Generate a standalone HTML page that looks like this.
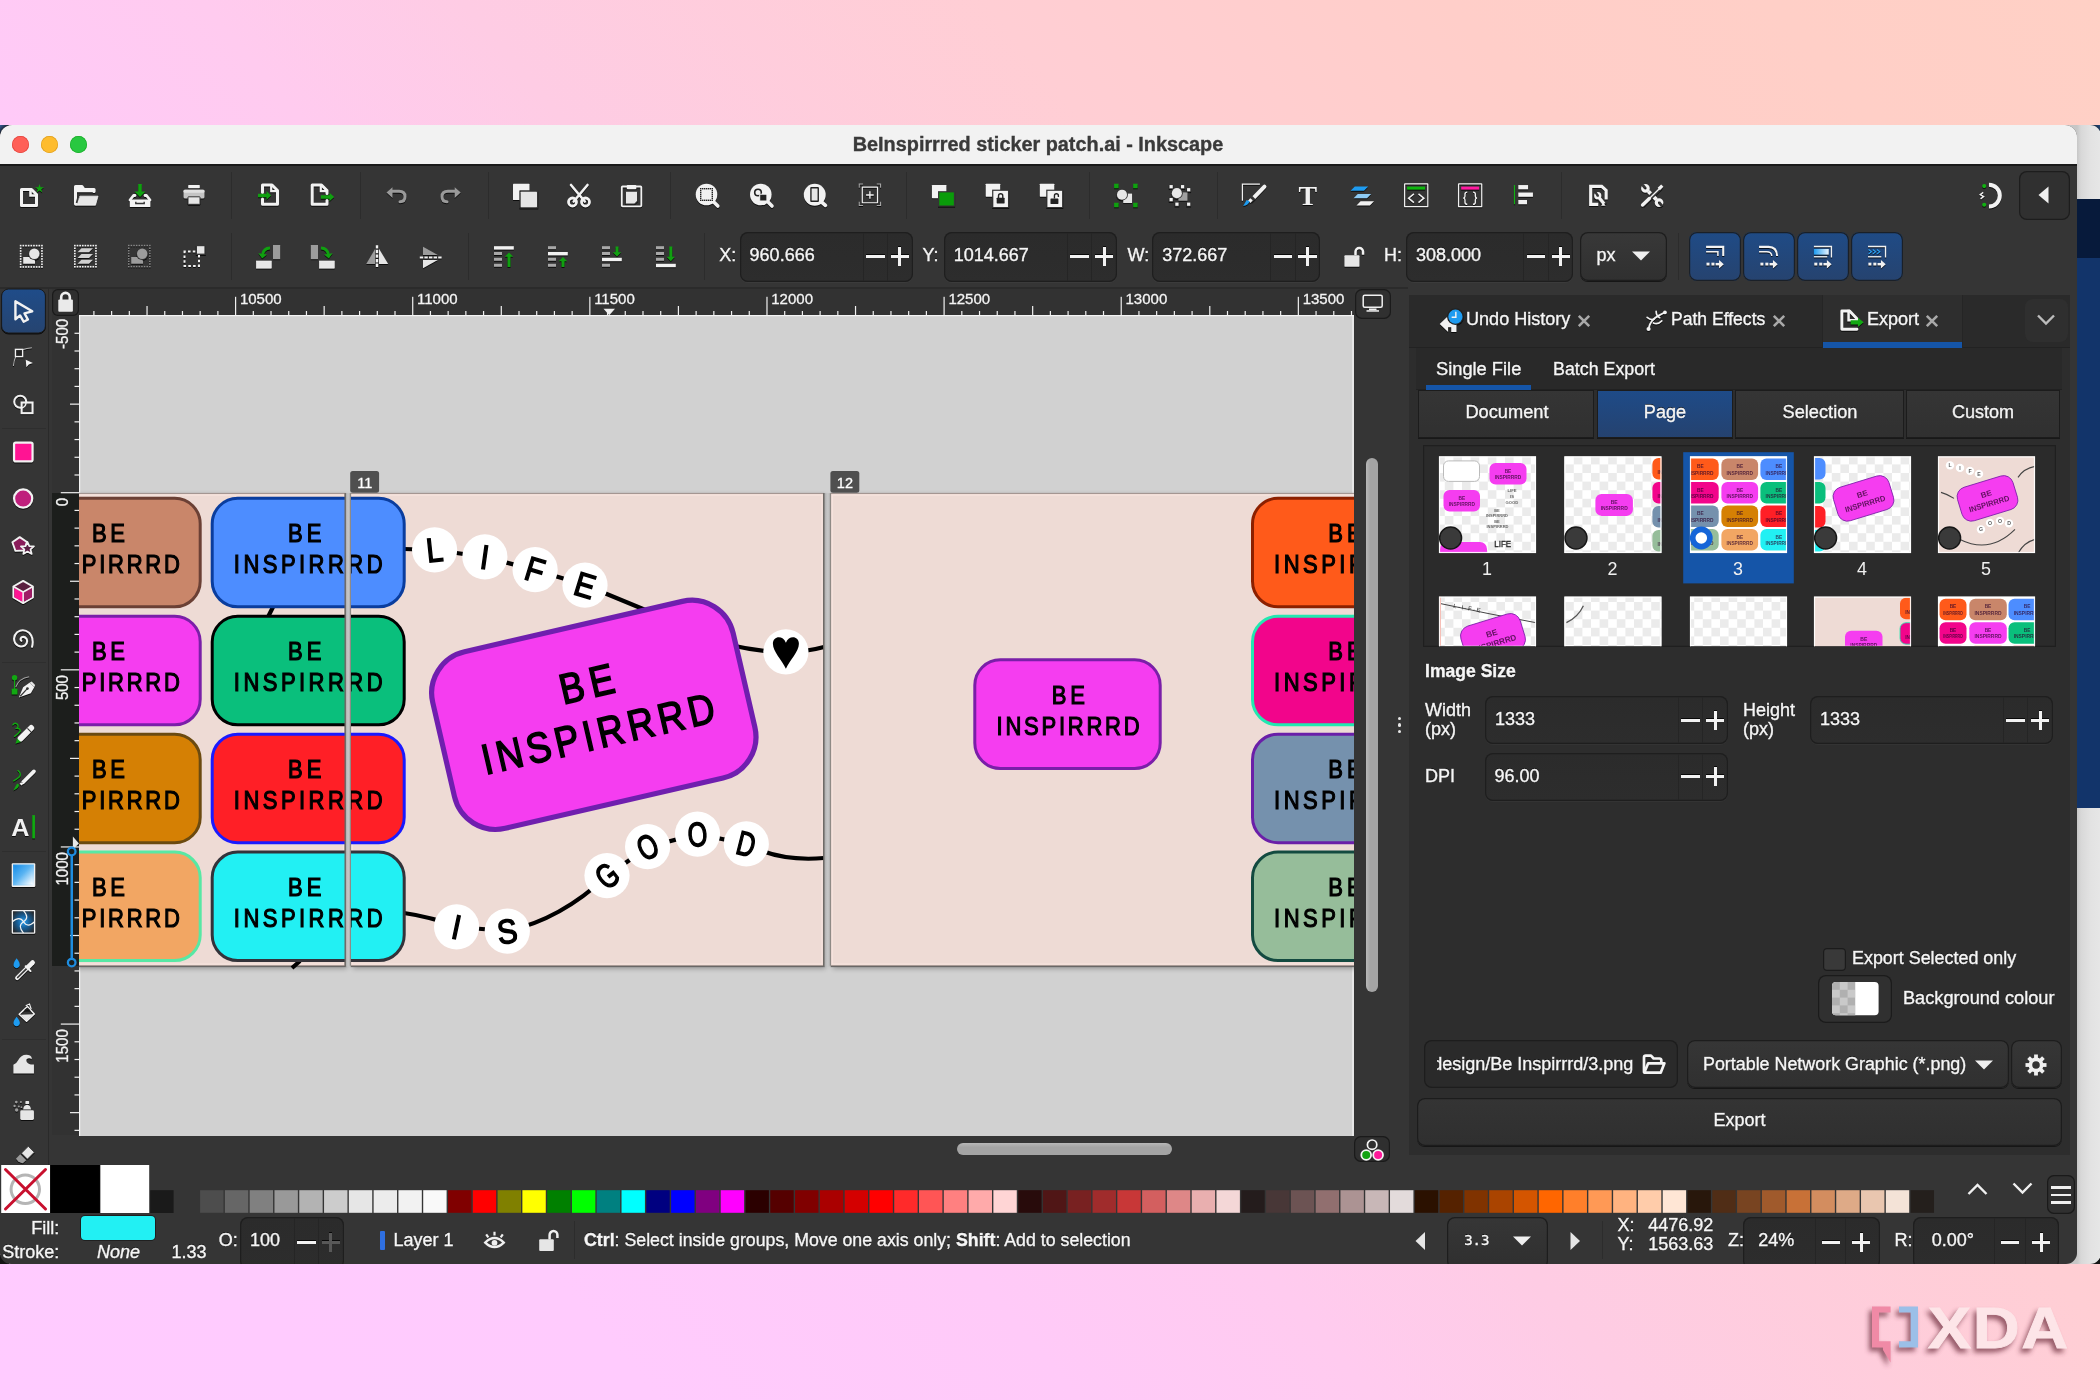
<!DOCTYPE html><html><head><meta charset="utf-8"><title>Inkscape</title><style>
html,body{margin:0;padding:0}
body{width:2100px;height:1400px;position:relative;overflow:hidden;font-family:"Liberation Sans",sans-serif;
background:linear-gradient(50deg,#ffcbff 0%,#ffcbfd 20%,#ffcaf8 33%,#ffcbef 42%,#fecce4 50%,#ffced4 66%,#ffcec9 80%,#ffd0c5 100%);}
div,svg{position:absolute;box-sizing:border-box}
svg{overflow:visible}
.t{white-space:nowrap;text-shadow:0 -1px 0 rgba(0,0,0,0.8);-webkit-text-stroke:0.35px currentColor}
#win{left:0;top:125px;width:2077px;height:1139px;border-radius:12px 12px 11px 11px;overflow:hidden;background:#353535;}
#wi{left:0;top:-125px;width:2100px;height:1400px;will-change:transform}
</style></head><body><div style="left:0px;top:125px;width:9px;height:9px;background:linear-gradient(135deg,#3a5f9a,#101010 60%);"></div><div style="left:0px;top:1255px;width:9px;height:9px;background:#151515;"></div><div style="left:2090px;top:125px;width:10px;height:10px;background:linear-gradient(225deg,#1f4a80,#151515 60%);"></div><div style="left:2090px;top:1254px;width:10px;height:10px;background:#151515;"></div><div style="left:2060px;top:125px;width:40.6px;height:1139px;background:linear-gradient(90deg,#c6c6c6 17px,#d8d8d8 21px,#e2e2e2 30px,#e6e6e6 40px);border-radius:11px;overflow:hidden;"><div style="left:0px;top:73.5px;width:60px;height:59px;background:#071a3b;"></div><div style="left:0px;top:132.5px;width:60px;height:550.5px;background:#12346a;"></div></div><div id="win"><div id="wi"><div style="left:0px;top:125px;width:2077px;height:40px;background:#f2f2f2;"></div><div style="left:0px;top:164.3px;width:2077px;height:1.4px;background:#1a1a1a;"></div><div style="left:11.799999999999999px;top:135.70000000000002px;width:17.2px;height:17.2px;background:#ff5f57;border-radius:50%;box-shadow:inset 0 0 0 0.7px #e2463f;"></div><div style="left:41.0px;top:135.70000000000002px;width:17.2px;height:17.2px;background:#febc2e;border-radius:50%;box-shadow:inset 0 0 0 0.7px #dfa023;"></div><div style="left:70.10000000000001px;top:135.70000000000002px;width:17.2px;height:17.2px;background:#28c840;border-radius:50%;box-shadow:inset 0 0 0 0.7px #1dad2b;"></div><div class="t" style="left:537.5px;width:1000px;text-align:center;top:134px;font-size:20px;line-height:20px;color:#3a3a3a;font-weight:bold;transform:scale(0.992,1);transform-origin:50% 0;text-shadow:none;">BeInspirrred sticker patch.ai - Inkscape</div><div style="left:231px;top:172px;width:1px;height:47px;background:#2c2c2c;"></div><div style="left:359.5px;top:172px;width:1px;height:47px;background:#2c2c2c;"></div><div style="left:488px;top:172px;width:1px;height:47px;background:#2c2c2c;"></div><div style="left:669.5px;top:172px;width:1px;height:47px;background:#2c2c2c;"></div><div style="left:906px;top:172px;width:1px;height:47px;background:#2c2c2c;"></div><div style="left:1088.5px;top:172px;width:1px;height:47px;background:#2c2c2c;"></div><div style="left:1217px;top:172px;width:1px;height:47px;background:#2c2c2c;"></div><div style="left:1561px;top:172px;width:1px;height:47px;background:#2c2c2c;"></div><div style="left:231px;top:233px;width:1px;height:47px;background:#2c2c2c;"></div><div style="left:467.5px;top:233px;width:1px;height:47px;background:#2c2c2c;"></div><div style="left:703.5px;top:233px;width:1px;height:47px;background:#2c2c2c;"></div><div style="left:1677.5px;top:233px;width:1px;height:47px;background:#2c2c2c;"></div><div class="t" style="left:719.3px;top:245px;font-size:18px;line-height:18px;color:#f6f6f6;transform:scale(1,1.04);transform-origin:0 0;">X:</div><div style="left:739.6px;top:232.1px;width:173px;height:49.5px;background:linear-gradient(#2b2b2b,#2d2d2d);border-radius:8px;box-shadow:inset 0 0 0 1.2px #1e1e1e, 0 1px 0 rgba(255,255,255,0.03);"></div><div class="t" style="left:749.6px;top:245px;font-size:18px;line-height:18px;color:#f6f6f6;transform:scale(1,1.04);transform-origin:0 0;">960.666</div><div style="left:862.6px;top:233.1px;width:1px;height:47.5px;background:#252525;"></div><div style="left:887.1px;top:233.1px;width:1px;height:47.5px;background:#252525;"></div><div style="left:866.15px;top:255.35000000000002px;width:18.4px;height:3px;background:#f2f2f2;box-shadow:0 -1px 0 rgba(0,0,0,0.8);"></div><div style="left:890.85px;top:255.35000000000002px;width:18.2px;height:3px;background:#f2f2f2;box-shadow:0 -1px 0 rgba(0,0,0,0.8);"></div><div style="left:898.45px;top:247.25000000000003px;width:3px;height:19.2px;background:#f2f2f2;box-shadow:0 -1px 0 rgba(0,0,0,0.8);"></div><div class="t" style="left:922.6px;top:245px;font-size:18px;line-height:18px;color:#f6f6f6;transform:scale(1,1.04);transform-origin:0 0;">Y:</div><div style="left:943.7px;top:232.1px;width:173px;height:49.5px;background:linear-gradient(#2b2b2b,#2d2d2d);border-radius:8px;box-shadow:inset 0 0 0 1.2px #1e1e1e, 0 1px 0 rgba(255,255,255,0.03);"></div><div class="t" style="left:953.7px;top:245px;font-size:18px;line-height:18px;color:#f6f6f6;transform:scale(1,1.04);transform-origin:0 0;">1014.667</div><div style="left:1066.7px;top:233.1px;width:1px;height:47.5px;background:#252525;"></div><div style="left:1091.2px;top:233.1px;width:1px;height:47.5px;background:#252525;"></div><div style="left:1070.25px;top:255.35000000000002px;width:18.4px;height:3px;background:#f2f2f2;box-shadow:0 -1px 0 rgba(0,0,0,0.8);"></div><div style="left:1094.95px;top:255.35000000000002px;width:18.2px;height:3px;background:#f2f2f2;box-shadow:0 -1px 0 rgba(0,0,0,0.8);"></div><div style="left:1102.55px;top:247.25000000000003px;width:3px;height:19.2px;background:#f2f2f2;box-shadow:0 -1px 0 rgba(0,0,0,0.8);"></div><div class="t" style="left:1127.5px;top:245px;font-size:18px;line-height:18px;color:#f6f6f6;transform:scale(1,1.04);transform-origin:0 0;">W:</div><div style="left:1152.3px;top:232.1px;width:167.8px;height:49.5px;background:linear-gradient(#2b2b2b,#2d2d2d);border-radius:8px;box-shadow:inset 0 0 0 1.2px #1e1e1e, 0 1px 0 rgba(255,255,255,0.03);"></div><div class="t" style="left:1162.3px;top:245px;font-size:18px;line-height:18px;color:#f6f6f6;transform:scale(1,1.04);transform-origin:0 0;">372.667</div><div style="left:1270.1px;top:233.1px;width:1px;height:47.5px;background:#252525;"></div><div style="left:1294.6px;top:233.1px;width:1px;height:47.5px;background:#252525;"></div><div style="left:1273.6499999999999px;top:255.35000000000002px;width:18.4px;height:3px;background:#f2f2f2;box-shadow:0 -1px 0 rgba(0,0,0,0.8);"></div><div style="left:1298.35px;top:255.35000000000002px;width:18.2px;height:3px;background:#f2f2f2;box-shadow:0 -1px 0 rgba(0,0,0,0.8);"></div><div style="left:1305.9499999999998px;top:247.25000000000003px;width:3px;height:19.2px;background:#f2f2f2;box-shadow:0 -1px 0 rgba(0,0,0,0.8);"></div><div class="t" style="left:1384px;top:245px;font-size:18px;line-height:18px;color:#f6f6f6;transform:scale(1,1.04);transform-origin:0 0;">H:</div><div style="left:1406px;top:232.1px;width:167.4px;height:49.5px;background:linear-gradient(#2b2b2b,#2d2d2d);border-radius:8px;box-shadow:inset 0 0 0 1.2px #1e1e1e, 0 1px 0 rgba(255,255,255,0.03);"></div><div class="t" style="left:1416px;top:245px;font-size:18px;line-height:18px;color:#f6f6f6;transform:scale(1,1.04);transform-origin:0 0;">308.000</div><div style="left:1523.4px;top:233.1px;width:1px;height:47.5px;background:#252525;"></div><div style="left:1547.9px;top:233.1px;width:1px;height:47.5px;background:#252525;"></div><div style="left:1526.95px;top:255.35000000000002px;width:18.4px;height:3px;background:#f2f2f2;box-shadow:0 -1px 0 rgba(0,0,0,0.8);"></div><div style="left:1551.65px;top:255.35000000000002px;width:18.2px;height:3px;background:#f2f2f2;box-shadow:0 -1px 0 rgba(0,0,0,0.8);"></div><div style="left:1559.25px;top:247.25000000000003px;width:3px;height:19.2px;background:#f2f2f2;box-shadow:0 -1px 0 rgba(0,0,0,0.8);"></div><div style="left:1580px;top:232.3px;width:86.5px;height:48.6px;background:linear-gradient(#383838,#303030);border-radius:8px;box-shadow:inset 0 0 0 1.2px #1d1d1d, 0 1px 0 #161616;"></div><div class="t" style="left:1596.5px;top:245px;font-size:18px;line-height:18px;color:#f6f6f6;transform:scale(1,1.04);transform-origin:0 0;">px</div><svg style="left:1631px;top:250px;" width="20" height="12" viewBox="0 0 20 12"><path d="M1 1.5 L19 1.5 L10 10.5Z" fill="#f0f0f0"/></svg><div style="left:1688.6px;top:232.3px;width:52px;height:48.8px;background:linear-gradient(#1f4b86,#26436f);border-radius:8px;box-shadow:inset 0 0 0 1.2px #1a2028;"></div><div style="left:1742.7px;top:232.3px;width:52px;height:48.8px;background:linear-gradient(#1f4b86,#26436f);border-radius:8px;box-shadow:inset 0 0 0 1.2px #1a2028;"></div><div style="left:1796.7px;top:232.3px;width:52px;height:48.8px;background:linear-gradient(#1f4b86,#26436f);border-radius:8px;box-shadow:inset 0 0 0 1.2px #1a2028;"></div><div style="left:1850.8px;top:232.3px;width:52px;height:48.8px;background:linear-gradient(#1f4b86,#26436f);border-radius:8px;box-shadow:inset 0 0 0 1.2px #1a2028;"></div><div style="left:2019px;top:171.3px;width:51px;height:48.5px;background:#303030;border-radius:8px;box-shadow:inset 0 0 0 1.2px #1d1d1d;"></div><svg style="left:2036px;top:185px;" width="14" height="20" viewBox="0 0 14 20"><path d="M12.5 1.5 L12.5 18.5 L2.5 10Z" fill="#f0f0f0"/></svg><div style="left:0px;top:287px;width:1408px;height:1.5px;background:#2b2b2b;"></div><div style="left:47.5px;top:288px;width:1.3px;height:877px;background:#2a2a2a;"></div><div style="left:52px;top:288.5px;width:1303px;height:27px;background:#323232;"></div><div style="left:52px;top:315px;width:27px;height:820px;background:#323232;"></div><div style="left:52px;top:493px;width:27px;height:473px;background:#1c1e1c;"></div><svg style="left:0px;top:0px;" width="1408" height="1200" viewBox="0 0 1408 1200"><rect x="93.30" y="311" width="1.2" height="4.5" fill="#f0f0f0"/><rect x="111.01" y="311" width="1.2" height="4.5" fill="#f0f0f0"/><rect x="128.72" y="311" width="1.2" height="4.5" fill="#f0f0f0"/><rect x="146.44" y="306" width="1.2" height="9.5" fill="#f0f0f0"/><rect x="164.15" y="311" width="1.2" height="4.5" fill="#f0f0f0"/><rect x="181.86" y="311" width="1.2" height="4.5" fill="#f0f0f0"/><rect x="199.57" y="311" width="1.2" height="4.5" fill="#f0f0f0"/><rect x="217.29" y="311" width="1.2" height="4.5" fill="#f0f0f0"/><rect x="235.00" y="296.8" width="1.2" height="18.7" fill="#f0f0f0"/><text x="239.90" y="303.8" font-family="Liberation Sans, sans-serif" font-size="15" fill="#f4f4f4" stroke="#f4f4f4" stroke-width="0.3">10500</text><rect x="252.71" y="311" width="1.2" height="4.5" fill="#f0f0f0"/><rect x="270.42" y="311" width="1.2" height="4.5" fill="#f0f0f0"/><rect x="288.14" y="311" width="1.2" height="4.5" fill="#f0f0f0"/><rect x="305.85" y="311" width="1.2" height="4.5" fill="#f0f0f0"/><rect x="323.56" y="306" width="1.2" height="9.5" fill="#f0f0f0"/><rect x="341.27" y="311" width="1.2" height="4.5" fill="#f0f0f0"/><rect x="358.99" y="311" width="1.2" height="4.5" fill="#f0f0f0"/><rect x="376.70" y="311" width="1.2" height="4.5" fill="#f0f0f0"/><rect x="394.41" y="311" width="1.2" height="4.5" fill="#f0f0f0"/><rect x="412.12" y="296.8" width="1.2" height="18.7" fill="#f0f0f0"/><text x="417.03" y="303.8" font-family="Liberation Sans, sans-serif" font-size="15" fill="#f4f4f4" stroke="#f4f4f4" stroke-width="0.3">11000</text><rect x="429.84" y="311" width="1.2" height="4.5" fill="#f0f0f0"/><rect x="447.55" y="311" width="1.2" height="4.5" fill="#f0f0f0"/><rect x="465.26" y="311" width="1.2" height="4.5" fill="#f0f0f0"/><rect x="482.97" y="311" width="1.2" height="4.5" fill="#f0f0f0"/><rect x="500.69" y="306" width="1.2" height="9.5" fill="#f0f0f0"/><rect x="518.40" y="311" width="1.2" height="4.5" fill="#f0f0f0"/><rect x="536.11" y="311" width="1.2" height="4.5" fill="#f0f0f0"/><rect x="553.82" y="311" width="1.2" height="4.5" fill="#f0f0f0"/><rect x="571.54" y="311" width="1.2" height="4.5" fill="#f0f0f0"/><rect x="589.25" y="296.8" width="1.2" height="18.7" fill="#f0f0f0"/><text x="594.15" y="303.8" font-family="Liberation Sans, sans-serif" font-size="15" fill="#f4f4f4" stroke="#f4f4f4" stroke-width="0.3">11500</text><rect x="606.96" y="311" width="1.2" height="4.5" fill="#f0f0f0"/><rect x="624.67" y="311" width="1.2" height="4.5" fill="#f0f0f0"/><rect x="642.39" y="311" width="1.2" height="4.5" fill="#f0f0f0"/><rect x="660.10" y="311" width="1.2" height="4.5" fill="#f0f0f0"/><rect x="677.81" y="306" width="1.2" height="9.5" fill="#f0f0f0"/><rect x="695.52" y="311" width="1.2" height="4.5" fill="#f0f0f0"/><rect x="713.24" y="311" width="1.2" height="4.5" fill="#f0f0f0"/><rect x="730.95" y="311" width="1.2" height="4.5" fill="#f0f0f0"/><rect x="748.66" y="311" width="1.2" height="4.5" fill="#f0f0f0"/><rect x="766.38" y="296.8" width="1.2" height="18.7" fill="#f0f0f0"/><text x="771.27" y="303.8" font-family="Liberation Sans, sans-serif" font-size="15" fill="#f4f4f4" stroke="#f4f4f4" stroke-width="0.3">12000</text><rect x="784.09" y="311" width="1.2" height="4.5" fill="#f0f0f0"/><rect x="801.80" y="311" width="1.2" height="4.5" fill="#f0f0f0"/><rect x="819.51" y="311" width="1.2" height="4.5" fill="#f0f0f0"/><rect x="837.23" y="311" width="1.2" height="4.5" fill="#f0f0f0"/><rect x="854.94" y="306" width="1.2" height="9.5" fill="#f0f0f0"/><rect x="872.65" y="311" width="1.2" height="4.5" fill="#f0f0f0"/><rect x="890.36" y="311" width="1.2" height="4.5" fill="#f0f0f0"/><rect x="908.08" y="311" width="1.2" height="4.5" fill="#f0f0f0"/><rect x="925.79" y="311" width="1.2" height="4.5" fill="#f0f0f0"/><rect x="943.50" y="296.8" width="1.2" height="18.7" fill="#f0f0f0"/><text x="948.40" y="303.8" font-family="Liberation Sans, sans-serif" font-size="15" fill="#f4f4f4" stroke="#f4f4f4" stroke-width="0.3">12500</text><rect x="961.21" y="311" width="1.2" height="4.5" fill="#f0f0f0"/><rect x="978.93" y="311" width="1.2" height="4.5" fill="#f0f0f0"/><rect x="996.64" y="311" width="1.2" height="4.5" fill="#f0f0f0"/><rect x="1014.35" y="311" width="1.2" height="4.5" fill="#f0f0f0"/><rect x="1032.06" y="306" width="1.2" height="9.5" fill="#f0f0f0"/><rect x="1049.78" y="311" width="1.2" height="4.5" fill="#f0f0f0"/><rect x="1067.49" y="311" width="1.2" height="4.5" fill="#f0f0f0"/><rect x="1085.20" y="311" width="1.2" height="4.5" fill="#f0f0f0"/><rect x="1102.91" y="311" width="1.2" height="4.5" fill="#f0f0f0"/><rect x="1120.62" y="296.8" width="1.2" height="18.7" fill="#f0f0f0"/><text x="1125.52" y="303.8" font-family="Liberation Sans, sans-serif" font-size="15" fill="#f4f4f4" stroke="#f4f4f4" stroke-width="0.3">13000</text><rect x="1138.34" y="311" width="1.2" height="4.5" fill="#f0f0f0"/><rect x="1156.05" y="311" width="1.2" height="4.5" fill="#f0f0f0"/><rect x="1173.76" y="311" width="1.2" height="4.5" fill="#f0f0f0"/><rect x="1191.48" y="311" width="1.2" height="4.5" fill="#f0f0f0"/><rect x="1209.19" y="306" width="1.2" height="9.5" fill="#f0f0f0"/><rect x="1226.90" y="311" width="1.2" height="4.5" fill="#f0f0f0"/><rect x="1244.61" y="311" width="1.2" height="4.5" fill="#f0f0f0"/><rect x="1262.33" y="311" width="1.2" height="4.5" fill="#f0f0f0"/><rect x="1280.04" y="311" width="1.2" height="4.5" fill="#f0f0f0"/><rect x="1297.75" y="296.8" width="1.2" height="18.7" fill="#f0f0f0"/><text x="1302.65" y="303.8" font-family="Liberation Sans, sans-serif" font-size="15" fill="#f4f4f4" stroke="#f4f4f4" stroke-width="0.3">13500</text><rect x="1315.46" y="311" width="1.2" height="4.5" fill="#f0f0f0"/><rect x="1333.17" y="311" width="1.2" height="4.5" fill="#f0f0f0"/><rect x="1350.89" y="311" width="1.2" height="4.5" fill="#f0f0f0"/><text transform="translate(67.6 318.88) rotate(-90) scale(1 1.04)" text-anchor="end" font-family="Liberation Sans, sans-serif" font-size="15" fill="#f4f4f4" stroke="#f4f4f4" stroke-width="0.3">-500</text><rect x="74.5" y="332.69" width="4.5" height="1.2" fill="#f0f0f0"/><rect x="74.5" y="350.40" width="4.5" height="1.2" fill="#f0f0f0"/><rect x="74.5" y="368.11" width="4.5" height="1.2" fill="#f0f0f0"/><rect x="74.5" y="385.82" width="4.5" height="1.2" fill="#f0f0f0"/><rect x="70" y="403.54" width="9" height="1.2" fill="#f0f0f0"/><rect x="74.5" y="421.25" width="4.5" height="1.2" fill="#f0f0f0"/><rect x="74.5" y="438.96" width="4.5" height="1.2" fill="#f0f0f0"/><rect x="74.5" y="456.67" width="4.5" height="1.2" fill="#f0f0f0"/><rect x="74.5" y="474.39" width="4.5" height="1.2" fill="#f0f0f0"/><rect x="60.8" y="492.10" width="18.2" height="1.2" fill="#f0f0f0"/><text transform="translate(67.6 497.90) rotate(-90) scale(1 1.04)" text-anchor="end" font-family="Liberation Sans, sans-serif" font-size="15" fill="#f4f4f4" stroke="#f4f4f4" stroke-width="0.3">0</text><rect x="74.5" y="509.81" width="4.5" height="1.2" fill="#f0f0f0"/><rect x="74.5" y="527.52" width="4.5" height="1.2" fill="#f0f0f0"/><rect x="74.5" y="545.24" width="4.5" height="1.2" fill="#f0f0f0"/><rect x="74.5" y="562.95" width="4.5" height="1.2" fill="#f0f0f0"/><rect x="70" y="580.66" width="9" height="1.2" fill="#f0f0f0"/><rect x="74.5" y="598.38" width="4.5" height="1.2" fill="#f0f0f0"/><rect x="74.5" y="616.09" width="4.5" height="1.2" fill="#f0f0f0"/><rect x="74.5" y="633.80" width="4.5" height="1.2" fill="#f0f0f0"/><rect x="74.5" y="651.51" width="4.5" height="1.2" fill="#f0f0f0"/><rect x="60.8" y="669.23" width="18.2" height="1.2" fill="#f0f0f0"/><text transform="translate(67.6 675.03) rotate(-90) scale(1 1.04)" text-anchor="end" font-family="Liberation Sans, sans-serif" font-size="15" fill="#f4f4f4" stroke="#f4f4f4" stroke-width="0.3">500</text><rect x="74.5" y="686.94" width="4.5" height="1.2" fill="#f0f0f0"/><rect x="74.5" y="704.65" width="4.5" height="1.2" fill="#f0f0f0"/><rect x="74.5" y="722.36" width="4.5" height="1.2" fill="#f0f0f0"/><rect x="74.5" y="740.07" width="4.5" height="1.2" fill="#f0f0f0"/><rect x="70" y="757.79" width="9" height="1.2" fill="#f0f0f0"/><rect x="74.5" y="775.50" width="4.5" height="1.2" fill="#f0f0f0"/><rect x="74.5" y="793.21" width="4.5" height="1.2" fill="#f0f0f0"/><rect x="74.5" y="810.92" width="4.5" height="1.2" fill="#f0f0f0"/><rect x="74.5" y="828.64" width="4.5" height="1.2" fill="#f0f0f0"/><rect x="60.8" y="846.35" width="18.2" height="1.2" fill="#f0f0f0"/><text transform="translate(67.6 852.15) rotate(-90) scale(1 1.04)" text-anchor="end" font-family="Liberation Sans, sans-serif" font-size="15" fill="#f4f4f4" stroke="#f4f4f4" stroke-width="0.3">1000</text><rect x="74.5" y="864.06" width="4.5" height="1.2" fill="#f0f0f0"/><rect x="74.5" y="881.77" width="4.5" height="1.2" fill="#f0f0f0"/><rect x="74.5" y="899.49" width="4.5" height="1.2" fill="#f0f0f0"/><rect x="74.5" y="917.20" width="4.5" height="1.2" fill="#f0f0f0"/><rect x="70" y="934.91" width="9" height="1.2" fill="#f0f0f0"/><rect x="74.5" y="952.62" width="4.5" height="1.2" fill="#f0f0f0"/><rect x="74.5" y="970.34" width="4.5" height="1.2" fill="#f0f0f0"/><rect x="74.5" y="988.05" width="4.5" height="1.2" fill="#f0f0f0"/><rect x="74.5" y="1005.76" width="4.5" height="1.2" fill="#f0f0f0"/><rect x="60.8" y="1023.48" width="18.2" height="1.2" fill="#f0f0f0"/><text transform="translate(67.6 1029.28) rotate(-90) scale(1 1.04)" text-anchor="end" font-family="Liberation Sans, sans-serif" font-size="15" fill="#f4f4f4" stroke="#f4f4f4" stroke-width="0.3">1500</text><rect x="74.5" y="1041.19" width="4.5" height="1.2" fill="#f0f0f0"/><rect x="74.5" y="1058.90" width="4.5" height="1.2" fill="#f0f0f0"/><rect x="74.5" y="1076.61" width="4.5" height="1.2" fill="#f0f0f0"/><rect x="74.5" y="1094.33" width="4.5" height="1.2" fill="#f0f0f0"/><rect x="70" y="1112.04" width="9" height="1.2" fill="#f0f0f0"/><rect x="74.5" y="1129.75" width="4.5" height="1.2" fill="#f0f0f0"/><path d="M603.5 308.8 L615 308.8 L609.3 315.2Z" fill="#f0f0f0"/><path d="M72.9 836.6 L78.9 843.4 L72.9 849.6Z" fill="#e8e8e8"/><rect x="70.5" y="851" width="2.5" height="112" fill="#1e8de0"/><circle cx="71.7" cy="851.5" r="3.8" fill="#1c1e1c" stroke="#1e8de0" stroke-width="2.3"/><circle cx="71.7" cy="962.6" r="3.8" fill="#1c1e1c" stroke="#1e8de0" stroke-width="2.3"/></svg><div style="left:52.3px;top:288.5px;width:27px;height:27px;background:#2f2f2f;border-radius:6px;box-shadow:inset 0 0 0 1.2px #1a1a1a;"></div><svg style="left:56px;top:290px;" width="20" height="24" viewBox="0 0 20 24"><path d="M5.2 10 V7.2 a4.3 4.3 0 0 1 8.6 0 V10" fill="none" stroke="#f0f0f0" stroke-width="2.6"/><rect x="2.3" y="9.5" width="14.6" height="12.3" rx="1" fill="#eaeaea"/></svg><div style="left:1355px;top:288.5px;width:35.5px;height:30px;background:#303030;border-radius:7px;box-shadow:inset 0 0 0 1.2px #1b1b1b;"></div><svg style="left:1361.5px;top:293px;" width="22" height="20" viewBox="0 0 22 20"><rect x="1.2" y="2.2" width="19" height="12" rx="1.5" fill="none" stroke="#f0f0f0" stroke-width="1.5"/><rect x="7" y="15.5" width="7.5" height="1.6" fill="#f0f0f0"/><rect x="4.5" y="17.2" width="12.5" height="1.5" fill="#f0f0f0"/></svg><div style="left:1366px;top:457.7px;width:12.3px;height:534.5px;background:linear-gradient(90deg,#b8b8b8,#a4a4a4 35%,#a4a4a4);border-radius:6px;"></div><div style="left:957px;top:1143px;width:215px;height:12px;background:linear-gradient(#b8b8b8,#a4a4a4 35%,#a4a4a4);border-radius:6px;"></div><div style="left:1354.2px;top:1136.3px;width:36.2px;height:25.4px;background:#2f2f2f;border-radius:7px;box-shadow:inset 0 0 0 1.2px #1a1a1a;"></div><svg style="left:1360px;top:1137px;" width="26" height="25" viewBox="0 0 26 25"><circle cx="12.1" cy="7.7" r="4.7" fill="#303030" stroke="#f4f4f4" stroke-width="1.7"/><circle cx="6.2" cy="18" r="4.9" fill="#12a312" stroke="#f4f4f4" stroke-width="1.8"/><circle cx="18.1" cy="18" r="4.9" fill="#ff1a9a" stroke="#f4f4f4" stroke-width="1.8"/></svg><svg style="left:79px;top:315px;overflow:hidden" width="1275" height="821" viewBox="79 315 1275 821"><defs><filter id="blur3" x="-5%" y="-5%" width="110%" height="110%"><feGaussianBlur stdDeviation="2.5"/></filter><linearGradient id="gapg" x1="0" x2="1" y1="0" y2="0"><stop offset="0" stop-color="#a4a4a4"/><stop offset="0.5" stop-color="#c6c6c6"/><stop offset="1" stop-color="#bdbdbd"/></linearGradient></defs><rect x="79" y="315" width="1275" height="821" fill="#d1d1d1"/><rect x="79" y="315" width="1275" height="1.2" fill="#f4f4f4"/><rect x="79" y="315" width="1.2" height="821" fill="#f4f4f4"/><rect x="1352.4" y="315" width="1.2" height="821" fill="#f4f4f4"/><rect x="-128" y="495.1" width="475.1" height="473.6" fill="#000" opacity="0.28" filter="url(#blur3)"/><rect x="352.6" y="495.1" width="473.1" height="473.6" fill="#000" opacity="0.28" filter="url(#blur3)"/><rect x="832.6" y="495.1" width="669.4" height="473.6" fill="#000" opacity="0.28" filter="url(#blur3)"/><rect x="-130" y="493.1" width="476.3" height="474.0" fill="#5c5c5c"/><rect x="-130" y="493.40000000000003" width="475.1" height="472.3" fill="#eedbd5" stroke="#a2948f" stroke-width="1"/><rect x="-128.3" y="495.1" width="471.70000000000005" height="468.90000000000003" fill="none" stroke="#f8e5df" stroke-width="1"/><rect x="350.6" y="493.1" width="474.3" height="474.0" fill="#5c5c5c"/><rect x="350.6" y="493.40000000000003" width="473.1" height="472.3" fill="#eedbd5" stroke="#a2948f" stroke-width="1"/><rect x="352.3" y="495.1" width="469.70000000000005" height="468.90000000000003" fill="none" stroke="#f8e5df" stroke-width="1"/><rect x="830.6" y="493.1" width="670.6" height="474.0" fill="#5c5c5c"/><rect x="830.6" y="493.40000000000003" width="669.4" height="472.3" fill="#eedbd5" stroke="#a2948f" stroke-width="1"/><rect x="832.3000000000001" y="495.1" width="666.0" height="468.90000000000003" fill="none" stroke="#f8e5df" stroke-width="1"/><path d="M404 549 L435 550 L485 557 L535 570 L585 585 L660 616" fill="none" stroke="#000" stroke-width="4.2" stroke-linecap="butt"/><path d="M730 645 Q760 652 786 652 Q806 652 824 647" fill="none" stroke="#000" stroke-width="4.2" stroke-linecap="butt"/><path d="M404 913 Q432 917 457 927 L507 931 Q560 920 607 876 L648 847 L697.5 834 L746 844 Q780 862 824 858" fill="none" stroke="#000" stroke-width="4.2" stroke-linecap="butt"/><path d="M273 607 L268 617" fill="none" stroke="#000" stroke-width="4.2" stroke-linecap="butt"/><path d="M300 961 L292 968" fill="none" stroke="#000" stroke-width="4.2" stroke-linecap="butt"/><rect x="15.2" y="498.3" width="185" height="108.5" rx="25.5" fill="#c9866a" stroke="#6b4035" stroke-width="3"/><text transform="translate(108.5 542.3) scale(0.86 1)" text-anchor="middle" font-family="Liberation Sans, sans-serif" font-size="25.6" textLength="38.4" lengthAdjust="spacing" fill="#000" stroke="#000" stroke-width="1.15" >BE</text><text transform="translate(108.3 573.0) scale(0.86 1)" text-anchor="middle" font-family="Liberation Sans, sans-serif" font-size="25.6" textLength="166.3" lengthAdjust="spacing" fill="#000" stroke="#000" stroke-width="1.15" >INSPIRRRD</text><rect x="15.2" y="616.3" width="185" height="108.5" rx="25.5" fill="#f53df0" stroke="#7a1fa8" stroke-width="3"/><text transform="translate(108.5 660.3) scale(0.86 1)" text-anchor="middle" font-family="Liberation Sans, sans-serif" font-size="25.6" textLength="38.4" lengthAdjust="spacing" fill="#000" stroke="#000" stroke-width="1.15" >BE</text><text transform="translate(108.3 691.0) scale(0.86 1)" text-anchor="middle" font-family="Liberation Sans, sans-serif" font-size="25.6" textLength="166.3" lengthAdjust="spacing" fill="#000" stroke="#000" stroke-width="1.15" >INSPIRRRD</text><rect x="15.2" y="734.2" width="185" height="108.5" rx="25.5" fill="#d58004" stroke="#6b4a10" stroke-width="3"/><text transform="translate(108.5 778.2) scale(0.86 1)" text-anchor="middle" font-family="Liberation Sans, sans-serif" font-size="25.6" textLength="38.4" lengthAdjust="spacing" fill="#000" stroke="#000" stroke-width="1.15" >BE</text><text transform="translate(108.3 808.9) scale(0.86 1)" text-anchor="middle" font-family="Liberation Sans, sans-serif" font-size="25.6" textLength="166.3" lengthAdjust="spacing" fill="#000" stroke="#000" stroke-width="1.15" >INSPIRRRD</text><rect x="15.2" y="852.1" width="185" height="108.5" rx="25.5" fill="#f2a663" stroke="#58e8a4" stroke-width="3"/><text transform="translate(108.5 896.1) scale(0.86 1)" text-anchor="middle" font-family="Liberation Sans, sans-serif" font-size="25.6" textLength="38.4" lengthAdjust="spacing" fill="#000" stroke="#000" stroke-width="1.15" >BE</text><text transform="translate(108.3 926.8) scale(0.86 1)" text-anchor="middle" font-family="Liberation Sans, sans-serif" font-size="25.6" textLength="166.3" lengthAdjust="spacing" fill="#000" stroke="#000" stroke-width="1.15" >INSPIRRRD</text><rect x="212.2" y="498.3" width="192" height="108.5" rx="25.5" fill="#4d8dff" stroke="#0a3d9e" stroke-width="3"/><text transform="translate(304.7 542.3) scale(0.86 1)" text-anchor="middle" font-family="Liberation Sans, sans-serif" font-size="25.6" textLength="39.0" lengthAdjust="spacing" fill="#000" stroke="#000" stroke-width="1.15" >BE</text><text transform="translate(308.2 573.0) scale(0.86 1)" text-anchor="middle" font-family="Liberation Sans, sans-serif" font-size="25.6" textLength="173.0" lengthAdjust="spacing" fill="#000" stroke="#000" stroke-width="1.15" >INSPIRRRD</text><rect x="212.2" y="616.3" width="192" height="108.5" rx="25.5" fill="#0abf7c" stroke="#000" stroke-width="3"/><text transform="translate(304.7 660.3) scale(0.86 1)" text-anchor="middle" font-family="Liberation Sans, sans-serif" font-size="25.6" textLength="39.0" lengthAdjust="spacing" fill="#000" stroke="#000" stroke-width="1.15" >BE</text><text transform="translate(308.2 691.0) scale(0.86 1)" text-anchor="middle" font-family="Liberation Sans, sans-serif" font-size="25.6" textLength="173.0" lengthAdjust="spacing" fill="#000" stroke="#000" stroke-width="1.15" >INSPIRRRD</text><rect x="212.2" y="734.2" width="192" height="108.5" rx="25.5" fill="#ff1f26" stroke="#1a1aff" stroke-width="3"/><text transform="translate(304.7 778.2) scale(0.86 1)" text-anchor="middle" font-family="Liberation Sans, sans-serif" font-size="25.6" textLength="39.0" lengthAdjust="spacing" fill="#000" stroke="#000" stroke-width="1.15" >BE</text><text transform="translate(308.2 808.9) scale(0.86 1)" text-anchor="middle" font-family="Liberation Sans, sans-serif" font-size="25.6" textLength="173.0" lengthAdjust="spacing" fill="#000" stroke="#000" stroke-width="1.15" >INSPIRRRD</text><rect x="212.2" y="852.1" width="192" height="108.5" rx="25.5" fill="#22f0f3" stroke="#33333a" stroke-width="3"/><text transform="translate(304.7 896.1) scale(0.86 1)" text-anchor="middle" font-family="Liberation Sans, sans-serif" font-size="25.6" textLength="39.0" lengthAdjust="spacing" fill="#000" stroke="#000" stroke-width="1.15" >BE</text><text transform="translate(308.2 926.8) scale(0.86 1)" text-anchor="middle" font-family="Liberation Sans, sans-serif" font-size="25.6" textLength="173.0" lengthAdjust="spacing" fill="#000" stroke="#000" stroke-width="1.15" >INSPIRRRD</text><rect x="1252.5" y="498.3" width="192" height="108.5" rx="25.5" fill="#ff5a1a" stroke="#8c2000" stroke-width="3"/><text transform="translate(1345.0 542.3) scale(0.86 1)" text-anchor="middle" font-family="Liberation Sans, sans-serif" font-size="25.6" textLength="39.0" lengthAdjust="spacing" fill="#000" stroke="#000" stroke-width="1.15" >BE</text><text transform="translate(1348.5 573.0) scale(0.86 1)" text-anchor="middle" font-family="Liberation Sans, sans-serif" font-size="25.6" textLength="173.0" lengthAdjust="spacing" fill="#000" stroke="#000" stroke-width="1.15" >INSPIRRRD</text><rect x="1252.5" y="616.3" width="192" height="108.5" rx="25.5" fill="#f2058b" stroke="#22e8b0" stroke-width="3"/><text transform="translate(1345.0 660.3) scale(0.86 1)" text-anchor="middle" font-family="Liberation Sans, sans-serif" font-size="25.6" textLength="39.0" lengthAdjust="spacing" fill="#000" stroke="#000" stroke-width="1.15" >BE</text><text transform="translate(1348.5 691.0) scale(0.86 1)" text-anchor="middle" font-family="Liberation Sans, sans-serif" font-size="25.6" textLength="173.0" lengthAdjust="spacing" fill="#000" stroke="#000" stroke-width="1.15" >INSPIRRRD</text><rect x="1252.5" y="734.2" width="192" height="108.5" rx="25.5" fill="#7591ad" stroke="#6a1fa8" stroke-width="3"/><text transform="translate(1345.0 778.2) scale(0.86 1)" text-anchor="middle" font-family="Liberation Sans, sans-serif" font-size="25.6" textLength="39.0" lengthAdjust="spacing" fill="#000" stroke="#000" stroke-width="1.15" >BE</text><text transform="translate(1348.5 808.9) scale(0.86 1)" text-anchor="middle" font-family="Liberation Sans, sans-serif" font-size="25.6" textLength="173.0" lengthAdjust="spacing" fill="#000" stroke="#000" stroke-width="1.15" >INSPIRRRD</text><rect x="1252.5" y="852.1" width="192" height="108.5" rx="25.5" fill="#96bd9a" stroke="#134a40" stroke-width="3"/><text transform="translate(1345.0 896.1) scale(0.86 1)" text-anchor="middle" font-family="Liberation Sans, sans-serif" font-size="25.6" textLength="39.0" lengthAdjust="spacing" fill="#000" stroke="#000" stroke-width="1.15" >BE</text><text transform="translate(1348.5 926.8) scale(0.86 1)" text-anchor="middle" font-family="Liberation Sans, sans-serif" font-size="25.6" textLength="173.0" lengthAdjust="spacing" fill="#000" stroke="#000" stroke-width="1.15" >INSPIRRRD</text><rect x="974.8" y="659.8" width="185.4" height="108.7" rx="25.5" fill="#f53df0" stroke="#7a1fa8" stroke-width="3"/><text transform="translate(1068.3 703.8) scale(0.86 1)" text-anchor="middle" font-family="Liberation Sans, sans-serif" font-size="25.6" textLength="38.4" lengthAdjust="spacing" fill="#000" stroke="#000" stroke-width="1.15" >BE</text><text transform="translate(1068.1 734.5) scale(0.86 1)" text-anchor="middle" font-family="Liberation Sans, sans-serif" font-size="25.6" textLength="166.3" lengthAdjust="spacing" fill="#000" stroke="#000" stroke-width="1.15" >INSPIRRRD</text><circle cx="434.6" cy="549.8" r="22.6" fill="#fff"/><text transform="translate(434.6 549.8) rotate(-6) scale(0.88 1)" x="0" y="12" text-anchor="middle" font-family="Liberation Sans, sans-serif" font-size="34" fill="#000" stroke="#000" stroke-width="1.5">L</text><circle cx="484.9" cy="556.9" r="22.6" fill="#fff"/><text transform="translate(484.9 556.9) rotate(8) scale(0.88 1)" x="0" y="12" text-anchor="middle" font-family="Liberation Sans, sans-serif" font-size="34" fill="#000" stroke="#000" stroke-width="1.5">I</text><circle cx="535.1" cy="569.7" r="22.6" fill="#fff"/><text transform="translate(535.1 569.7) rotate(17) scale(0.88 1)" x="0" y="12" text-anchor="middle" font-family="Liberation Sans, sans-serif" font-size="34" fill="#000" stroke="#000" stroke-width="1.5">F</text><circle cx="585.0" cy="585.2" r="22.6" fill="#fff"/><text transform="translate(585.0 585.2) rotate(17) scale(0.88 1)" x="0" y="12" text-anchor="middle" font-family="Liberation Sans, sans-serif" font-size="34" fill="#000" stroke="#000" stroke-width="1.5">E</text><circle cx="785.9" cy="651.8" r="22.6" fill="#fff"/><path transform="translate(785.9 651.8) rotate(0)" d="M0 17 C-4 8 -13 0 -13 -8 C-13 -16 -3 -17 0 -9 C3 -17 13 -16 13 -8 C13 0 4 8 0 17Z" fill="#000"/><circle cx="456.6" cy="926.9" r="22.6" fill="#fff"/><text transform="translate(456.6 926.9) rotate(12) scale(0.88 1)" x="0" y="12" text-anchor="middle" font-family="Liberation Sans, sans-serif" font-size="34" fill="#000" stroke="#000" stroke-width="1.5">I</text><circle cx="507.3" cy="931.1" r="22.6" fill="#fff"/><text transform="translate(507.3 931.1) rotate(-8) scale(0.88 1)" x="0" y="12" text-anchor="middle" font-family="Liberation Sans, sans-serif" font-size="34" fill="#000" stroke="#000" stroke-width="1.5">S</text><circle cx="607.0" cy="875.6" r="22.6" fill="#fff"/><text transform="translate(607.0 875.6) rotate(-38) scale(0.74 1)" x="0" y="12" text-anchor="middle" font-family="Liberation Sans, sans-serif" font-size="34" fill="#000" stroke="#000" stroke-width="1.5">G</text><circle cx="647.6" cy="846.7" r="22.6" fill="#fff"/><text transform="translate(647.6 846.7) rotate(-25) scale(0.74 1)" x="0" y="12" text-anchor="middle" font-family="Liberation Sans, sans-serif" font-size="34" fill="#000" stroke="#000" stroke-width="1.5">O</text><circle cx="697.5" cy="834.1" r="22.6" fill="#fff"/><text transform="translate(697.5 834.1) rotate(-5) scale(0.74 1)" x="0" y="12" text-anchor="middle" font-family="Liberation Sans, sans-serif" font-size="34" fill="#000" stroke="#000" stroke-width="1.5">O</text><circle cx="746.3" cy="843.9" r="22.6" fill="#fff"/><text transform="translate(746.3 843.9) rotate(14) scale(0.74 1)" x="0" y="12" text-anchor="middle" font-family="Liberation Sans, sans-serif" font-size="34" fill="#000" stroke="#000" stroke-width="1.5">D</text><g transform="translate(593.8 714.85) rotate(-13)"><rect x="-154.15" y="-90.65" width="308.3" height="181.3" rx="42.4" fill="#f53df0" stroke="#6f1fae" stroke-width="5.2"/><text transform="translate(0.0 -17.1) scale(0.86 1)" text-anchor="middle" font-family="Liberation Sans, sans-serif" font-size="42.6" textLength="64.0" lengthAdjust="spacing" fill="#000" stroke="#000" stroke-width="1.6" >BE</text><text transform="translate(0.0 34.0) scale(0.86 1)" text-anchor="middle" font-family="Liberation Sans, sans-serif" font-size="42.6" textLength="276.7" lengthAdjust="spacing" fill="#000" stroke="#000" stroke-width="1.6" >INSPIRRRD</text></g><rect x="345.1" y="493.1" width="5.5" height="473.6" fill="url(#gapg)"/><rect x="344.5" y="493.1" width="1.4" height="473.6" fill="#6a6662"/><rect x="349.8" y="493.1" width="1.2" height="472.6" fill="#8f8a86"/><rect x="823.7" y="493.1" width="6.899999999999977" height="473.6" fill="url(#gapg)"/><rect x="823.1" y="493.1" width="1.4" height="473.6" fill="#6a6662"/><rect x="829.8000000000001" y="493.1" width="1.2" height="472.6" fill="#8f8a86"/><rect x="350.2" y="471.1" width="28.9" height="21.6" rx="2.5" fill="#4f4f4f"/><text x="364.7" y="488.3" text-anchor="middle" font-family="Liberation Sans, sans-serif" font-size="14.5" fill="#fff" stroke="#fff" stroke-width="0.3">11</text><rect x="830.4" y="471.1" width="28.9" height="21.6" rx="2.5" fill="#4f4f4f"/><text x="844.9" y="488.3" text-anchor="middle" font-family="Liberation Sans, sans-serif" font-size="14.5" fill="#fff" stroke="#fff" stroke-width="0.3">12</text></svg><div style="left:1408.9px;top:294.7px;width:660.7px;height:860.5px;background:#2d2d2d;"></div><div style="left:1408.9px;top:294.7px;width:660.7px;height:53px;background:#2a2a2a;"></div><div style="left:1408.9px;top:346.8px;width:660.7px;height:1.6px;background:#222;"></div><div style="left:1823px;top:294.7px;width:138.7px;height:53px;background:#2e2e2e;"></div><div style="left:1822.3px;top:294.7px;width:1px;height:53px;background:#252525;"></div><div style="left:1961.7px;top:294.7px;width:1px;height:53px;background:#252525;"></div><div style="left:1823px;top:342.4px;width:138.7px;height:6.1px;background:#1555a8;"></div><div class="t" style="left:1466px;top:309px;font-size:18px;line-height:18px;color:#f6f6f6;transform:scale(1.0035,1.04);transform-origin:0 0;">Undo History</div><svg style="left:1575.6px;top:312.8px;" width="16" height="16" viewBox="0 0 16 16"><path d="M2.8 2.8 L13.2 13.2 M13.2 2.8 L2.8 13.2" stroke="#a9a9a9" stroke-width="2.6" stroke-linecap="butt" fill="none"/></svg><div class="t" style="left:1671.3px;top:309px;font-size:18px;line-height:18px;color:#f6f6f6;transform:scale(0.9749,1.04);transform-origin:0 0;">Path Effects</div><svg style="left:1771px;top:312.8px;" width="16" height="16" viewBox="0 0 16 16"><path d="M2.8 2.8 L13.2 13.2 M13.2 2.8 L2.8 13.2" stroke="#a9a9a9" stroke-width="2.6" stroke-linecap="butt" fill="none"/></svg><div class="t" style="left:1866.8px;top:309px;font-size:18px;line-height:18px;color:#f6f6f6;transform:scale(1.0015,1.04);transform-origin:0 0;">Export</div><svg style="left:1924px;top:312.8px;" width="16" height="16" viewBox="0 0 16 16"><path d="M2.8 2.8 L13.2 13.2 M13.2 2.8 L2.8 13.2" stroke="#a9a9a9" stroke-width="2.6" stroke-linecap="butt" fill="none"/></svg><div style="left:2024.5px;top:299px;width:43px;height:42.8px;background:#2f2f2f;border-radius:8px;"></div><svg style="left:2036px;top:313px;" width="20" height="14" viewBox="0 0 20 14"><path d="M2 2.5 L10 10.5 L18 2.5" fill="none" stroke="#bdbdbd" stroke-width="2.4"/></svg><div style="left:1416px;top:348.4px;width:646px;height:41.5px;background:#292929;"></div><div style="left:1416px;top:388.6px;width:646px;height:1.5px;background:#212121;"></div><div style="left:1426px;top:384.8px;width:105.3px;height:5.6px;background:#1555a8;"></div><div class="t" style="left:1436px;top:359px;font-size:18px;line-height:18px;color:#f6f6f6;transform:scale(1.0149,1.04);transform-origin:0 0;">Single File</div><div class="t" style="left:1552.8px;top:359px;font-size:18px;line-height:18px;color:#f6f6f6;transform:scale(0.9898,1.04);transform-origin:0 0;">Batch Export</div><div style="left:1418.3px;top:390.4px;width:175.70000000000005px;height:47.2px;background:linear-gradient(#353535,#303030);box-shadow:inset 0 0 0 1px #1c1c1c, 0 1px 0 #181818;"></div><div class="t" style="left:1006.75px;width:1000px;text-align:center;top:402px;font-size:18px;line-height:18px;color:#f6f6f6;transform:scale(1.0141,1.04);transform-origin:50% 0;">Document</div><div style="left:1596.8px;top:390.4px;width:135.79999999999995px;height:47.2px;background:linear-gradient(#1e4b88,#25426f);box-shadow:inset 0 0 0 1px #1c1c1c, 0 1px 0 #181818;"></div><div class="t" style="left:1165.2999999999997px;width:1000px;text-align:center;top:402px;font-size:18px;line-height:18px;color:#f6f6f6;transform:scale(1.0062,1.04);transform-origin:50% 0;">Page</div><div style="left:1735px;top:390.4px;width:168.5px;height:47.2px;background:linear-gradient(#353535,#303030);box-shadow:inset 0 0 0 1px #1c1c1c, 0 1px 0 #181818;"></div><div class="t" style="left:1319.85px;width:1000px;text-align:center;top:402px;font-size:18px;line-height:18px;color:#f6f6f6;transform:scale(1.0101,1.04);transform-origin:50% 0;">Selection</div><div style="left:1905.5px;top:390.4px;width:154.19999999999982px;height:47.2px;background:linear-gradient(#353535,#303030);box-shadow:inset 0 0 0 1px #1c1c1c, 0 1px 0 #181818;"></div><div class="t" style="left:1483.1999999999998px;width:1000px;text-align:center;top:402px;font-size:18px;line-height:18px;color:#f6f6f6;transform:scale(0.9981,1.04);transform-origin:50% 0;">Custom</div><div style="left:1422.5px;top:444.5px;width:633px;height:202px;background:#2b2b2b;box-shadow:inset 0 0 0 1.2px #1f1f1f;"></div><svg style="left:1400px;top:440px;" width="680" height="220" viewBox="1400 440 680 220"><defs><pattern id="ck" width="17.2" height="17.2" patternUnits="userSpaceOnUse"><rect width="17.2" height="17.2" fill="#ffffff"/><rect width="8.6" height="8.6" fill="#ebebeb"/><rect x="8.6" y="8.6" width="8.6" height="8.6" fill="#ebebeb"/></pattern><clipPath id="t0"><rect x="1439" y="456.4" width="97" height="96.6"/></clipPath><clipPath id="u0"><rect x="1439" y="596.7" width="97" height="49"/></clipPath><clipPath id="t1"><rect x="1564.4" y="456.4" width="97" height="96.6"/></clipPath><clipPath id="u1"><rect x="1564.4" y="596.7" width="97" height="49"/></clipPath><clipPath id="t2"><rect x="1690" y="456.4" width="97" height="96.6"/></clipPath><clipPath id="u2"><rect x="1690" y="596.7" width="97" height="49"/></clipPath><clipPath id="t3"><rect x="1814" y="456.4" width="97" height="96.6"/></clipPath><clipPath id="u3"><rect x="1814" y="596.7" width="97" height="49"/></clipPath><clipPath id="t4"><rect x="1938" y="456.4" width="97" height="96.6"/></clipPath><clipPath id="u4"><rect x="1938" y="596.7" width="97" height="49"/></clipPath></defs><rect x="1683.2" y="452.2" width="110.6" height="131.2" fill="#1555a8"/><rect x="1439" y="456.4" width="97" height="96.6" fill="url(#ck)"/><g clip-path="url(#t0)"><rect x="1443.5" y="460.9" width="36" height="20.5" rx="5" fill="#fff" stroke="#bbb" stroke-width="1"/><g><rect x="1489.5" y="462.9" width="37" height="21.5" rx="6.0200000000000005" fill="#f53df0" stroke="none" stroke-width="0.8"/><text x="1508.0" y="472.6" text-anchor="middle" font-family="Liberation Sans, sans-serif" font-weight="bold" font-size="4.8" fill="#2a002a" opacity="0.72">BE</text><text x="1508.0" y="478.8" text-anchor="middle" font-family="Liberation Sans, sans-serif" font-weight="bold" font-size="4.8" fill="#2a002a" opacity="0.72" textLength="26.6" lengthAdjust="spacingAndGlyphs">INSPIRRRD</text></g><g><rect x="1443.5" y="489.9" width="36.5" height="21.5" rx="6.0200000000000005" fill="#f53df0" stroke="none" stroke-width="0.8"/><text x="1461.8" y="499.6" text-anchor="middle" font-family="Liberation Sans, sans-serif" font-weight="bold" font-size="4.8" fill="#2a002a" opacity="0.72">BE</text><text x="1461.8" y="505.8" text-anchor="middle" font-family="Liberation Sans, sans-serif" font-weight="bold" font-size="4.8" fill="#2a002a" opacity="0.72" textLength="26.3" lengthAdjust="spacingAndGlyphs">INSPIRRRD</text></g><text x="1512" y="492.4" font-family="Liberation Sans, sans-serif" font-weight="bold" fill="#333" opacity="0.75" text-anchor="middle" font-size="4.2">LIFE</text><text x="1512" y="498.2" font-family="Liberation Sans, sans-serif" font-weight="bold" fill="#333" opacity="0.75" text-anchor="middle" font-size="4.2">IS</text><text x="1512" y="504.0" font-family="Liberation Sans, sans-serif" font-weight="bold" fill="#333" opacity="0.75" text-anchor="middle" font-size="4.2">GOOD</text><text x="1497" y="511.9" font-family="Liberation Sans, sans-serif" font-weight="bold" fill="#333" opacity="0.75" text-anchor="middle" font-size="4">BE</text><text x="1497" y="517.4" font-family="Liberation Sans, sans-serif" font-weight="bold" fill="#333" opacity="0.75" text-anchor="middle" font-size="4">INSPIRRRD</text><text x="1497" y="522.9" font-family="Liberation Sans, sans-serif" font-weight="bold" fill="#333" opacity="0.75" text-anchor="middle" font-size="4">BE</text><text x="1497.5" y="528.4" font-family="Liberation Sans, sans-serif" font-weight="bold" fill="#333" opacity="0.75" text-anchor="middle" font-size="4">INSPIRRRD</text><g><rect x="1440" y="541.9" width="47" height="25" rx="7.000000000000001" fill="#f53df0" stroke="none" stroke-width="0.8"/></g><text x="1494.2" y="547.0" font-family="Liberation Sans, sans-serif" font-size="9" fill="#222" stroke="#222" stroke-width="0.3" textLength="17" lengthAdjust="spacingAndGlyphs">LIFE</text></g><rect x="1439.5" y="456.9" width="96" height="95.6" fill="none" stroke="#fff" stroke-width="1.2" opacity="0.9"/><circle cx="1450.6" cy="538" r="11" fill="#3a3a3a" stroke="#161616" stroke-width="1.4"/><text x="1487" y="574.6" text-anchor="middle" font-family="Liberation Sans, sans-serif" font-size="17.9" fill="#f0f0f0">1</text><rect x="1564.4" y="456.4" width="97" height="96.6" fill="url(#ck)"/><g clip-path="url(#t1)"><g><rect x="1595.4" y="493.9" width="37.5" height="22" rx="6.16" fill="#f53df0" stroke="none" stroke-width="0.8"/><text x="1614.2" y="503.8" text-anchor="middle" font-family="Liberation Sans, sans-serif" font-weight="bold" font-size="5.0" fill="#2a002a" opacity="0.72">BE</text><text x="1614.2" y="510.2" text-anchor="middle" font-family="Liberation Sans, sans-serif" font-weight="bold" font-size="5.0" fill="#2a002a" opacity="0.72" textLength="27.0" lengthAdjust="spacingAndGlyphs">INSPIRRRD</text></g><g><rect x="1652.4" y="457.9" width="37" height="21.5" rx="6.0200000000000005" fill="#ff5a1a" stroke="none" stroke-width="0.8"/><text x="1670.9" y="467.6" text-anchor="middle" font-family="Liberation Sans, sans-serif" font-weight="bold" font-size="4.8" fill="#2a002a" opacity="0.72">BE</text><text x="1670.9" y="473.8" text-anchor="middle" font-family="Liberation Sans, sans-serif" font-weight="bold" font-size="4.8" fill="#2a002a" opacity="0.72" textLength="26.6" lengthAdjust="spacingAndGlyphs">INSPIRRRD</text></g><g><rect x="1652.4" y="481.9" width="37" height="21.5" rx="6.0200000000000005" fill="#f2058b" stroke="none" stroke-width="0.8"/><text x="1670.9" y="491.6" text-anchor="middle" font-family="Liberation Sans, sans-serif" font-weight="bold" font-size="4.8" fill="#2a002a" opacity="0.72">BE</text><text x="1670.9" y="497.8" text-anchor="middle" font-family="Liberation Sans, sans-serif" font-weight="bold" font-size="4.8" fill="#2a002a" opacity="0.72" textLength="26.6" lengthAdjust="spacingAndGlyphs">INSPIRRRD</text></g><g><rect x="1652.4" y="505.9" width="37" height="21.5" rx="6.0200000000000005" fill="#7591ad" stroke="none" stroke-width="0.8"/><text x="1670.9" y="515.6" text-anchor="middle" font-family="Liberation Sans, sans-serif" font-weight="bold" font-size="4.8" fill="#2a002a" opacity="0.72">BE</text><text x="1670.9" y="521.8" text-anchor="middle" font-family="Liberation Sans, sans-serif" font-weight="bold" font-size="4.8" fill="#2a002a" opacity="0.72" textLength="26.6" lengthAdjust="spacingAndGlyphs">INSPIRRRD</text></g><g><rect x="1652.4" y="529.9" width="37" height="21.5" rx="6.0200000000000005" fill="#96bd9a" stroke="none" stroke-width="0.8"/><text x="1670.9" y="539.6" text-anchor="middle" font-family="Liberation Sans, sans-serif" font-weight="bold" font-size="4.8" fill="#2a002a" opacity="0.72">BE</text><text x="1670.9" y="545.8" text-anchor="middle" font-family="Liberation Sans, sans-serif" font-weight="bold" font-size="4.8" fill="#2a002a" opacity="0.72" textLength="26.6" lengthAdjust="spacingAndGlyphs">INSPIRRRD</text></g></g><rect x="1564.9" y="456.9" width="96" height="95.6" fill="none" stroke="#fff" stroke-width="1.2" opacity="0.9"/><circle cx="1576.0" cy="538" r="11" fill="#3a3a3a" stroke="#161616" stroke-width="1.4"/><text x="1612.4" y="574.6" text-anchor="middle" font-family="Liberation Sans, sans-serif" font-size="17.9" fill="#f0f0f0">2</text><rect x="1690" y="456.4" width="97" height="96.6" fill="#fff"/><g clip-path="url(#t2)"><g><rect x="1682" y="458.59999999999997" width="36.7" height="21.5" rx="6.0200000000000005" fill="#ff5a1a" stroke="none" stroke-width="0.8"/><text x="1700.3" y="468.3" text-anchor="middle" font-family="Liberation Sans, sans-serif" font-weight="bold" font-size="4.8" fill="#2a002a" opacity="0.72">BE</text><text x="1700.3" y="474.5" text-anchor="middle" font-family="Liberation Sans, sans-serif" font-weight="bold" font-size="4.8" fill="#2a002a" opacity="0.72" textLength="26.4" lengthAdjust="spacingAndGlyphs">INSPIRRRD</text></g><g><rect x="1721.4" y="458.59999999999997" width="36.7" height="21.5" rx="6.0200000000000005" fill="#c9866a" stroke="none" stroke-width="0.8"/><text x="1739.8" y="468.3" text-anchor="middle" font-family="Liberation Sans, sans-serif" font-weight="bold" font-size="4.8" fill="#2a002a" opacity="0.72">BE</text><text x="1739.8" y="474.5" text-anchor="middle" font-family="Liberation Sans, sans-serif" font-weight="bold" font-size="4.8" fill="#2a002a" opacity="0.72" textLength="26.4" lengthAdjust="spacingAndGlyphs">INSPIRRRD</text></g><g><rect x="1760.4" y="458.59999999999997" width="36.7" height="21.5" rx="6.0200000000000005" fill="#4d8dff" stroke="none" stroke-width="0.8"/><text x="1778.8" y="468.3" text-anchor="middle" font-family="Liberation Sans, sans-serif" font-weight="bold" font-size="4.8" fill="#2a002a" opacity="0.72">BE</text><text x="1778.8" y="474.5" text-anchor="middle" font-family="Liberation Sans, sans-serif" font-weight="bold" font-size="4.8" fill="#2a002a" opacity="0.72" textLength="26.4" lengthAdjust="spacingAndGlyphs">INSPIRRRD</text></g><g><rect x="1682" y="482.09999999999997" width="36.7" height="21.5" rx="6.0200000000000005" fill="#f2058b" stroke="none" stroke-width="0.8"/><text x="1700.3" y="491.8" text-anchor="middle" font-family="Liberation Sans, sans-serif" font-weight="bold" font-size="4.8" fill="#2a002a" opacity="0.72">BE</text><text x="1700.3" y="498.0" text-anchor="middle" font-family="Liberation Sans, sans-serif" font-weight="bold" font-size="4.8" fill="#2a002a" opacity="0.72" textLength="26.4" lengthAdjust="spacingAndGlyphs">INSPIRRRD</text></g><g><rect x="1721.4" y="482.09999999999997" width="36.7" height="21.5" rx="6.0200000000000005" fill="#f53df0" stroke="none" stroke-width="0.8"/><text x="1739.8" y="491.8" text-anchor="middle" font-family="Liberation Sans, sans-serif" font-weight="bold" font-size="4.8" fill="#2a002a" opacity="0.72">BE</text><text x="1739.8" y="498.0" text-anchor="middle" font-family="Liberation Sans, sans-serif" font-weight="bold" font-size="4.8" fill="#2a002a" opacity="0.72" textLength="26.4" lengthAdjust="spacingAndGlyphs">INSPIRRRD</text></g><g><rect x="1760.4" y="482.09999999999997" width="36.7" height="21.5" rx="6.0200000000000005" fill="#0abf7c" stroke="none" stroke-width="0.8"/><text x="1778.8" y="491.8" text-anchor="middle" font-family="Liberation Sans, sans-serif" font-weight="bold" font-size="4.8" fill="#2a002a" opacity="0.72">BE</text><text x="1778.8" y="498.0" text-anchor="middle" font-family="Liberation Sans, sans-serif" font-weight="bold" font-size="4.8" fill="#2a002a" opacity="0.72" textLength="26.4" lengthAdjust="spacingAndGlyphs">INSPIRRRD</text></g><g><rect x="1682" y="505.59999999999997" width="36.7" height="21.5" rx="6.0200000000000005" fill="#7591ad" stroke="none" stroke-width="0.8"/><text x="1700.3" y="515.3" text-anchor="middle" font-family="Liberation Sans, sans-serif" font-weight="bold" font-size="4.8" fill="#2a002a" opacity="0.72">BE</text><text x="1700.3" y="521.5" text-anchor="middle" font-family="Liberation Sans, sans-serif" font-weight="bold" font-size="4.8" fill="#2a002a" opacity="0.72" textLength="26.4" lengthAdjust="spacingAndGlyphs">INSPIRRRD</text></g><g><rect x="1721.4" y="505.59999999999997" width="36.7" height="21.5" rx="6.0200000000000005" fill="#d58004" stroke="none" stroke-width="0.8"/><text x="1739.8" y="515.3" text-anchor="middle" font-family="Liberation Sans, sans-serif" font-weight="bold" font-size="4.8" fill="#2a002a" opacity="0.72">BE</text><text x="1739.8" y="521.5" text-anchor="middle" font-family="Liberation Sans, sans-serif" font-weight="bold" font-size="4.8" fill="#2a002a" opacity="0.72" textLength="26.4" lengthAdjust="spacingAndGlyphs">INSPIRRRD</text></g><g><rect x="1760.4" y="505.59999999999997" width="36.7" height="21.5" rx="6.0200000000000005" fill="#ff1f26" stroke="none" stroke-width="0.8"/><text x="1778.8" y="515.3" text-anchor="middle" font-family="Liberation Sans, sans-serif" font-weight="bold" font-size="4.8" fill="#2a002a" opacity="0.72">BE</text><text x="1778.8" y="521.5" text-anchor="middle" font-family="Liberation Sans, sans-serif" font-weight="bold" font-size="4.8" fill="#2a002a" opacity="0.72" textLength="26.4" lengthAdjust="spacingAndGlyphs">INSPIRRRD</text></g><g><rect x="1682" y="529.0999999999999" width="36.7" height="21.5" rx="6.0200000000000005" fill="#96bd9a" stroke="none" stroke-width="0.8"/><text x="1700.3" y="538.8" text-anchor="middle" font-family="Liberation Sans, sans-serif" font-weight="bold" font-size="4.8" fill="#2a002a" opacity="0.72">BE</text><text x="1700.3" y="545.0" text-anchor="middle" font-family="Liberation Sans, sans-serif" font-weight="bold" font-size="4.8" fill="#2a002a" opacity="0.72" textLength="26.4" lengthAdjust="spacingAndGlyphs">INSPIRRRD</text></g><g><rect x="1721.4" y="529.0999999999999" width="36.7" height="21.5" rx="6.0200000000000005" fill="#f2a663" stroke="none" stroke-width="0.8"/><text x="1739.8" y="538.8" text-anchor="middle" font-family="Liberation Sans, sans-serif" font-weight="bold" font-size="4.8" fill="#2a002a" opacity="0.72">BE</text><text x="1739.8" y="545.0" text-anchor="middle" font-family="Liberation Sans, sans-serif" font-weight="bold" font-size="4.8" fill="#2a002a" opacity="0.72" textLength="26.4" lengthAdjust="spacingAndGlyphs">INSPIRRRD</text></g><g><rect x="1760.4" y="529.0999999999999" width="36.7" height="21.5" rx="6.0200000000000005" fill="#22f0f3" stroke="none" stroke-width="0.8"/><text x="1778.8" y="538.8" text-anchor="middle" font-family="Liberation Sans, sans-serif" font-weight="bold" font-size="4.8" fill="#2a002a" opacity="0.72">BE</text><text x="1778.8" y="545.0" text-anchor="middle" font-family="Liberation Sans, sans-serif" font-weight="bold" font-size="4.8" fill="#2a002a" opacity="0.72" textLength="26.4" lengthAdjust="spacingAndGlyphs">INSPIRRRD</text></g></g><rect x="1690.5" y="456.9" width="96" height="95.6" fill="none" stroke="#fff" stroke-width="1.2" opacity="0.9"/><circle cx="1701.3" cy="538" r="8.6" fill="#fff" stroke="#1565d8" stroke-width="5.6"/><text x="1738" y="574.6" text-anchor="middle" font-family="Liberation Sans, sans-serif" font-size="17.9" fill="#f0f0f0">3</text><rect x="1814" y="456.4" width="97" height="96.6" fill="url(#ck)"/><g clip-path="url(#t3)"><g><rect x="1788" y="457.9" width="37.5" height="21.5" rx="6.0200000000000005" fill="#4d8dff" stroke="none" stroke-width="0.8"/></g><g><rect x="1788" y="481.9" width="37.5" height="21.5" rx="6.0200000000000005" fill="#0abf7c" stroke="none" stroke-width="0.8"/></g><g><rect x="1788" y="505.9" width="37.5" height="21.5" rx="6.0200000000000005" fill="#ff1f26" stroke="none" stroke-width="0.8"/></g><g><rect x="1788" y="529.9" width="37.5" height="21.5" rx="6.0200000000000005" fill="#22f0f3" stroke="none" stroke-width="0.8"/></g><g transform="rotate(-17 1863.5 498.4)"><rect x="1834.5" y="480.9" width="58" height="35" rx="9.8" fill="#f53df0" stroke="#7a1fa8" stroke-width="0.8"/><text x="1863.5" y="496.6" text-anchor="middle" font-family="Liberation Sans, sans-serif" font-weight="bold" font-size="7.9" fill="#2a002a" opacity="0.72">BE</text><text x="1863.5" y="506.8" text-anchor="middle" font-family="Liberation Sans, sans-serif" font-weight="bold" font-size="7.9" fill="#2a002a" opacity="0.72" textLength="41.8" lengthAdjust="spacingAndGlyphs">INSPIRRRD</text></g></g><rect x="1814.5" y="456.9" width="96" height="95.6" fill="none" stroke="#fff" stroke-width="1.2" opacity="0.9"/><circle cx="1825.6" cy="538" r="11" fill="#3a3a3a" stroke="#161616" stroke-width="1.4"/><text x="1862" y="574.6" text-anchor="middle" font-family="Liberation Sans, sans-serif" font-size="17.9" fill="#f0f0f0">4</text><rect x="1938" y="456.4" width="97" height="96.6" fill="#eedbd5"/><g clip-path="url(#t4)"><path d="M1941 492.4 Q1948 494.4 1954 498.4 M2018 477.4 Q2024 468.4 2035 466.4 M1960 539.4 Q1990 554.4 2015 529.4 M2018 553.4 Q2024 542.4 2035 539.4" fill="none" stroke="#444" stroke-width="1.1"/><circle cx="1950" cy="465.4" r="4.2" fill="#fff"/><text x="1950" y="467.29999999999995" text-anchor="middle" font-family="Liberation Sans, sans-serif" font-weight="bold" font-size="5.2" fill="#333" opacity="0.8">L</text><circle cx="1960" cy="467.9" r="4.2" fill="#fff"/><text x="1960" y="469.79999999999995" text-anchor="middle" font-family="Liberation Sans, sans-serif" font-weight="bold" font-size="5.2" fill="#333" opacity="0.8">I</text><circle cx="1970" cy="470.9" r="4.2" fill="#fff"/><text x="1970" y="472.79999999999995" text-anchor="middle" font-family="Liberation Sans, sans-serif" font-weight="bold" font-size="5.2" fill="#333" opacity="0.8">F</text><circle cx="1979" cy="473.9" r="4.2" fill="#fff"/><text x="1979" y="475.79999999999995" text-anchor="middle" font-family="Liberation Sans, sans-serif" font-weight="bold" font-size="5.2" fill="#333" opacity="0.8">E</text><circle cx="1981" cy="529.4" r="4.2" fill="#fff"/><text x="1981" y="531.3" text-anchor="middle" font-family="Liberation Sans, sans-serif" font-weight="bold" font-size="5.2" fill="#333" opacity="0.8">G</text><circle cx="1990" cy="522.9" r="4.2" fill="#fff"/><text x="1990" y="524.8" text-anchor="middle" font-family="Liberation Sans, sans-serif" font-weight="bold" font-size="5.2" fill="#333" opacity="0.8">O</text><circle cx="2000" cy="520.9" r="4.2" fill="#fff"/><text x="2000" y="522.8" text-anchor="middle" font-family="Liberation Sans, sans-serif" font-weight="bold" font-size="5.2" fill="#333" opacity="0.8">O</text><circle cx="2009" cy="523.4" r="4.2" fill="#fff"/><text x="2009" y="525.3" text-anchor="middle" font-family="Liberation Sans, sans-serif" font-weight="bold" font-size="5.2" fill="#333" opacity="0.8">D</text><g transform="rotate(-17 1987.5 498.4)"><rect x="1958.5" y="480.9" width="58" height="35" rx="9.8" fill="#f53df0" stroke="#7a1fa8" stroke-width="0.8"/><text x="1987.5" y="496.6" text-anchor="middle" font-family="Liberation Sans, sans-serif" font-weight="bold" font-size="7.9" fill="#2a002a" opacity="0.72">BE</text><text x="1987.5" y="506.8" text-anchor="middle" font-family="Liberation Sans, sans-serif" font-weight="bold" font-size="7.9" fill="#2a002a" opacity="0.72" textLength="41.8" lengthAdjust="spacingAndGlyphs">INSPIRRRD</text></g></g><rect x="1938.5" y="456.9" width="96" height="95.6" fill="none" stroke="#fff" stroke-width="1.2" opacity="0.9"/><circle cx="1949.6" cy="538" r="11" fill="#3a3a3a" stroke="#161616" stroke-width="1.4"/><text x="1986" y="574.6" text-anchor="middle" font-family="Liberation Sans, sans-serif" font-size="17.9" fill="#f0f0f0">5</text><rect x="1439" y="596.7" width="97" height="49.5" fill="url(#ck)"/><g clip-path="url(#u0)"><path d="M1441 603.7 L1489 613.7 L1536 622.7" fill="none" stroke="#444" stroke-width="1"/><text x="1453" y="607.7" transform="rotate(10 1453 607.7)" font-family="Liberation Sans, sans-serif" font-size="6" fill="#333" letter-spacing="1.5">L·I·F·E</text><g transform="rotate(-17 1493.0 637.7)"><rect x="1462" y="619.2" width="62" height="37" rx="10.360000000000001" fill="#f53df0" stroke="#7a1fa8" stroke-width="0.8"/><text x="1493.0" y="635.9" text-anchor="middle" font-family="Liberation Sans, sans-serif" font-weight="bold" font-size="8.3" fill="#2a002a" opacity="0.72">BE</text><text x="1493.0" y="646.6" text-anchor="middle" font-family="Liberation Sans, sans-serif" font-weight="bold" font-size="8.3" fill="#2a002a" opacity="0.72" textLength="44.6" lengthAdjust="spacingAndGlyphs">INSPIRRRD</text></g><rect x="1439" y="596.7" width="2" height="50" fill="#f6b9b0"/></g><path d="M1439.5 646.2 V597.2 H1535.5 V646.2" fill="none" stroke="#fff" stroke-width="1.2" opacity="0.9"/><rect x="1564.4" y="596.7" width="97" height="49.5" fill="url(#ck)"/><g clip-path="url(#u1)"><path d="M1566.4 622.7 Q1578.4 616.7 1583.4 605.7" fill="none" stroke="#555" stroke-width="1.3"/></g><path d="M1564.9 646.2 V597.2 H1660.9 V646.2" fill="none" stroke="#fff" stroke-width="1.2" opacity="0.9"/><rect x="1690" y="596.7" width="97" height="49.5" fill="url(#ck)"/><g clip-path="url(#u2)"></g><path d="M1690.5 646.2 V597.2 H1786.5 V646.2" fill="none" stroke="#fff" stroke-width="1.2" opacity="0.9"/><rect x="1814" y="596.7" width="97" height="49.5" fill="#eedbd5"/><g clip-path="url(#u3)"><g><rect x="1845" y="630.7" width="37.5" height="22" rx="6.16" fill="#f53df0" stroke="none" stroke-width="0.8"/><text x="1863.8" y="640.6" text-anchor="middle" font-family="Liberation Sans, sans-serif" font-weight="bold" font-size="5.0" fill="#2a002a" opacity="0.72">BE</text><text x="1863.8" y="647.0" text-anchor="middle" font-family="Liberation Sans, sans-serif" font-weight="bold" font-size="5.0" fill="#2a002a" opacity="0.72" textLength="27.0" lengthAdjust="spacingAndGlyphs">INSPIRRRD</text></g><g><rect x="1900" y="597.7" width="37" height="21.5" rx="6.0200000000000005" fill="#ff5a1a" stroke="none" stroke-width="0.8"/><text x="1918.5" y="607.4" text-anchor="middle" font-family="Liberation Sans, sans-serif" font-weight="bold" font-size="4.8" fill="#2a002a" opacity="0.72">BE</text><text x="1918.5" y="613.6" text-anchor="middle" font-family="Liberation Sans, sans-serif" font-weight="bold" font-size="4.8" fill="#2a002a" opacity="0.72" textLength="26.6" lengthAdjust="spacingAndGlyphs">INSPIRRRD</text></g><g><rect x="1900" y="622.7" width="37" height="21.5" rx="6.0200000000000005" fill="#f2058b" stroke="#22e8b0" stroke-width="0.8"/><text x="1918.5" y="632.4" text-anchor="middle" font-family="Liberation Sans, sans-serif" font-weight="bold" font-size="4.8" fill="#2a002a" opacity="0.72">BE</text><text x="1918.5" y="638.6" text-anchor="middle" font-family="Liberation Sans, sans-serif" font-weight="bold" font-size="4.8" fill="#2a002a" opacity="0.72" textLength="26.6" lengthAdjust="spacingAndGlyphs">INSPIRRRD</text></g></g><path d="M1814.5 646.2 V597.2 H1910.5 V646.2" fill="none" stroke="#fff" stroke-width="1.2" opacity="0.9"/><rect x="1938" y="596.7" width="97" height="49.5" fill="#fff"/><g clip-path="url(#u4)"><g><rect x="1939.5" y="598.7" width="27" height="21.5" rx="6.0200000000000005" fill="#ff5a1a" stroke="none" stroke-width="0.8"/><text x="1953.0" y="608.4" text-anchor="middle" font-family="Liberation Sans, sans-serif" font-weight="bold" font-size="4.8" fill="#2a002a" opacity="0.72">BE</text><text x="1953.0" y="614.6" text-anchor="middle" font-family="Liberation Sans, sans-serif" font-weight="bold" font-size="4.8" fill="#2a002a" opacity="0.72" textLength="19.4" lengthAdjust="spacingAndGlyphs">INSPIRRRD</text></g><g><rect x="1969.3" y="598.7" width="37.5" height="21.5" rx="6.0200000000000005" fill="#c9866a" stroke="none" stroke-width="0.8"/><text x="1988.0" y="608.4" text-anchor="middle" font-family="Liberation Sans, sans-serif" font-weight="bold" font-size="4.8" fill="#2a002a" opacity="0.72">BE</text><text x="1988.0" y="614.6" text-anchor="middle" font-family="Liberation Sans, sans-serif" font-weight="bold" font-size="4.8" fill="#2a002a" opacity="0.72" textLength="27.0" lengthAdjust="spacingAndGlyphs">INSPIRRRD</text></g><g><rect x="2008.5" y="598.7" width="37.5" height="21.5" rx="6.0200000000000005" fill="#4d8dff" stroke="none" stroke-width="0.8"/><text x="2027.2" y="608.4" text-anchor="middle" font-family="Liberation Sans, sans-serif" font-weight="bold" font-size="4.8" fill="#2a002a" opacity="0.72">BE</text><text x="2027.2" y="614.6" text-anchor="middle" font-family="Liberation Sans, sans-serif" font-weight="bold" font-size="4.8" fill="#2a002a" opacity="0.72" textLength="27.0" lengthAdjust="spacingAndGlyphs">INSPIRRRD</text></g><g><rect x="1939.5" y="622.2" width="27" height="21.5" rx="6.0200000000000005" fill="#f2058b" stroke="none" stroke-width="0.8"/><text x="1953.0" y="631.9" text-anchor="middle" font-family="Liberation Sans, sans-serif" font-weight="bold" font-size="4.8" fill="#2a002a" opacity="0.72">BE</text><text x="1953.0" y="638.1" text-anchor="middle" font-family="Liberation Sans, sans-serif" font-weight="bold" font-size="4.8" fill="#2a002a" opacity="0.72" textLength="19.4" lengthAdjust="spacingAndGlyphs">INSPIRRRD</text></g><g><rect x="1969.3" y="622.2" width="37.5" height="21.5" rx="6.0200000000000005" fill="#f53df0" stroke="none" stroke-width="0.8"/><text x="1988.0" y="631.9" text-anchor="middle" font-family="Liberation Sans, sans-serif" font-weight="bold" font-size="4.8" fill="#2a002a" opacity="0.72">BE</text><text x="1988.0" y="638.1" text-anchor="middle" font-family="Liberation Sans, sans-serif" font-weight="bold" font-size="4.8" fill="#2a002a" opacity="0.72" textLength="27.0" lengthAdjust="spacingAndGlyphs">INSPIRRRD</text></g><g><rect x="2008.5" y="622.2" width="37.5" height="21.5" rx="6.0200000000000005" fill="#0abf7c" stroke="none" stroke-width="0.8"/><text x="2027.2" y="631.9" text-anchor="middle" font-family="Liberation Sans, sans-serif" font-weight="bold" font-size="4.8" fill="#2a002a" opacity="0.72">BE</text><text x="2027.2" y="638.1" text-anchor="middle" font-family="Liberation Sans, sans-serif" font-weight="bold" font-size="4.8" fill="#2a002a" opacity="0.72" textLength="27.0" lengthAdjust="spacingAndGlyphs">INSPIRRRD</text></g><g><rect x="1939.5" y="645.7" width="27" height="21.5" rx="6.0200000000000005" fill="#7591ad" stroke="none" stroke-width="0.8"/><text x="1953.0" y="655.4" text-anchor="middle" font-family="Liberation Sans, sans-serif" font-weight="bold" font-size="4.8" fill="#2a002a" opacity="0.72">BE</text><text x="1953.0" y="661.6" text-anchor="middle" font-family="Liberation Sans, sans-serif" font-weight="bold" font-size="4.8" fill="#2a002a" opacity="0.72" textLength="19.4" lengthAdjust="spacingAndGlyphs">INSPIRRRD</text></g><g><rect x="1969.3" y="645.7" width="37.5" height="21.5" rx="6.0200000000000005" fill="#d58004" stroke="none" stroke-width="0.8"/><text x="1988.0" y="655.4" text-anchor="middle" font-family="Liberation Sans, sans-serif" font-weight="bold" font-size="4.8" fill="#2a002a" opacity="0.72">BE</text><text x="1988.0" y="661.6" text-anchor="middle" font-family="Liberation Sans, sans-serif" font-weight="bold" font-size="4.8" fill="#2a002a" opacity="0.72" textLength="27.0" lengthAdjust="spacingAndGlyphs">INSPIRRRD</text></g><g><rect x="2008.5" y="645.7" width="37.5" height="21.5" rx="6.0200000000000005" fill="#ff1f26" stroke="none" stroke-width="0.8"/><text x="2027.2" y="655.4" text-anchor="middle" font-family="Liberation Sans, sans-serif" font-weight="bold" font-size="4.8" fill="#2a002a" opacity="0.72">BE</text><text x="2027.2" y="661.6" text-anchor="middle" font-family="Liberation Sans, sans-serif" font-weight="bold" font-size="4.8" fill="#2a002a" opacity="0.72" textLength="27.0" lengthAdjust="spacingAndGlyphs">INSPIRRRD</text></g></g><path d="M1938.5 646.2 V597.2 H2034.5 V646.2" fill="none" stroke="#fff" stroke-width="1.2" opacity="0.9"/></svg><div class="t" style="left:1424.5px;top:661px;font-size:18px;line-height:18px;color:#f6f6f6;font-weight:bold;transform:scale(0.9759,1.04);transform-origin:0 0;">Image Size</div><div class="t" style="left:1425px;top:700px;font-size:18px;line-height:18px;color:#f6f6f6;transform:scale(1,1.04);transform-origin:0 0;">Width</div><div class="t" style="left:1425px;top:719px;font-size:18px;line-height:18px;color:#f6f6f6;transform:scale(1,1.04);transform-origin:0 0;">(px)</div><div style="left:1485px;top:696px;width:242.7px;height:48.3px;background:linear-gradient(#2b2b2b,#2d2d2d);border-radius:8px;box-shadow:inset 0 0 0 1.2px #1e1e1e, 0 1px 0 rgba(255,255,255,0.03);"></div><div class="t" style="left:1495px;top:709px;font-size:18px;line-height:18px;color:#f6f6f6;transform:scale(1,1.04);transform-origin:0 0;">1333</div><div style="left:1677.7px;top:697px;width:1px;height:46.3px;background:#252525;"></div><div style="left:1702.2px;top:697px;width:1px;height:46.3px;background:#252525;"></div><div style="left:1681.25px;top:718.65px;width:18.4px;height:3px;background:#f2f2f2;box-shadow:0 -1px 0 rgba(0,0,0,0.8);"></div><div style="left:1705.95px;top:718.65px;width:18.2px;height:3px;background:#f2f2f2;box-shadow:0 -1px 0 rgba(0,0,0,0.8);"></div><div style="left:1713.55px;top:710.55px;width:3px;height:19.2px;background:#f2f2f2;box-shadow:0 -1px 0 rgba(0,0,0,0.8);"></div><div class="t" style="left:1743px;top:700px;font-size:18px;line-height:18px;color:#f6f6f6;transform:scale(1,1.04);transform-origin:0 0;">Height</div><div class="t" style="left:1743px;top:719px;font-size:18px;line-height:18px;color:#f6f6f6;transform:scale(1,1.04);transform-origin:0 0;">(px)</div><div style="left:1810px;top:696px;width:242.7px;height:48.3px;background:linear-gradient(#2b2b2b,#2d2d2d);border-radius:8px;box-shadow:inset 0 0 0 1.2px #1e1e1e, 0 1px 0 rgba(255,255,255,0.03);"></div><div class="t" style="left:1820px;top:709px;font-size:18px;line-height:18px;color:#f6f6f6;transform:scale(1,1.04);transform-origin:0 0;">1333</div><div style="left:2002.6999999999998px;top:697px;width:1px;height:46.3px;background:#252525;"></div><div style="left:2027.1999999999998px;top:697px;width:1px;height:46.3px;background:#252525;"></div><div style="left:2006.2499999999998px;top:718.65px;width:18.4px;height:3px;background:#f2f2f2;box-shadow:0 -1px 0 rgba(0,0,0,0.8);"></div><div style="left:2030.9499999999998px;top:718.65px;width:18.2px;height:3px;background:#f2f2f2;box-shadow:0 -1px 0 rgba(0,0,0,0.8);"></div><div style="left:2038.5499999999997px;top:710.55px;width:3px;height:19.2px;background:#f2f2f2;box-shadow:0 -1px 0 rgba(0,0,0,0.8);"></div><div class="t" style="left:1425px;top:766px;font-size:18px;line-height:18px;color:#f6f6f6;transform:scale(1,1.04);transform-origin:0 0;">DPI</div><div style="left:1485px;top:752.7px;width:242.7px;height:48.3px;background:linear-gradient(#2b2b2b,#2d2d2d);border-radius:8px;box-shadow:inset 0 0 0 1.2px #1e1e1e, 0 1px 0 rgba(255,255,255,0.03);"></div><div class="t" style="left:1494.5px;top:766px;font-size:18px;line-height:18px;color:#f6f6f6;transform:scale(1,1.04);transform-origin:0 0;">96.00</div><div style="left:1677.7px;top:753.7px;width:1px;height:46.3px;background:#252525;"></div><div style="left:1702.2px;top:753.7px;width:1px;height:46.3px;background:#252525;"></div><div style="left:1681.25px;top:775.35px;width:18.4px;height:3px;background:#f2f2f2;box-shadow:0 -1px 0 rgba(0,0,0,0.8);"></div><div style="left:1705.95px;top:775.35px;width:18.2px;height:3px;background:#f2f2f2;box-shadow:0 -1px 0 rgba(0,0,0,0.8);"></div><div style="left:1713.55px;top:767.25px;width:3px;height:19.2px;background:#f2f2f2;box-shadow:0 -1px 0 rgba(0,0,0,0.8);"></div><div style="left:1398px;top:716.8px;width:3.4px;height:3.4px;background:#e8e8e8;border-radius:50%;"></div><div style="left:1398px;top:723.3px;width:3.4px;height:3.4px;background:#e8e8e8;border-radius:50%;"></div><div style="left:1398px;top:729.8px;width:3.4px;height:3.4px;background:#e8e8e8;border-radius:50%;"></div><div style="left:1823.3px;top:948.3px;width:22.4px;height:22.4px;background:#393939;border-radius:4px;box-shadow:inset 0 0 0 1.2px #1b1b1b;"></div><div class="t" style="left:1851.6px;top:948px;font-size:18px;line-height:18px;color:#f6f6f6;transform:scale(0.9946,1.04);transform-origin:0 0;">Export Selected only</div><div style="left:1818.3px;top:975px;width:73.7px;height:47.7px;background:#303030;border-radius:8px;box-shadow:inset 0 0 0 1.2px #1b1b1b;"></div><svg style="left:1831.7px;top:981.7px;" width="47" height="34" viewBox="0 0 47 34"><defs><pattern id="ck2" width="15.6" height="15.6" patternUnits="userSpaceOnUse"><rect width="15.6" height="15.6" fill="#c9c9c9"/><rect width="7.8" height="7.8" fill="#b0b0b0"/><rect x="7.8" y="7.8" width="7.8" height="7.8" fill="#b0b0b0"/></pattern><clipPath id="cpb"><rect width="46.6" height="33.3" rx="4"/></clipPath></defs><g clip-path="url(#cpb)"><rect width="47" height="34" fill="#fff"/><rect width="23.3" height="34" fill="url(#ck2)"/></g></svg><div class="t" style="left:1902.6px;top:988px;font-size:18px;line-height:18px;color:#f6f6f6;transform:scale(1.0094,1.04);transform-origin:0 0;">Background colour</div><div style="left:1424px;top:1040.2px;width:253.7px;height:48.1px;background:#2a2a2a;border-radius:8px;box-shadow:inset 0 0 0 1.2px #1d1d1d;"></div><div style="left:1436.5px;top:1045px;width:200px;height:40px;overflow:hidden;"><div class="t" style="left:-4.3px;top:9px;font-size:18px;line-height:18px;color:#f6f6f6;transform:scale(1,1.04);transform-origin:0 0;">design/Be Inspirrrd/3.png</div></div><svg style="left:1641px;top:1052px;" width="26" height="24" viewBox="0 0 26 24"><path d="M3 20.5 V5.5 a1.8 1.8 0 0 1 1.8 -1.8 H10 l2.6 2.8 H18.5 a1.8 1.8 0 0 1 1.8 1.8 V10.2" fill="none" stroke="#f4f4f4" stroke-width="2.7" stroke-linejoin="round"/><path d="M3.2 20.6 L7.2 11.3 H23.4 L19.8 20.6 Z" fill="none" stroke="#f4f4f4" stroke-width="2.7" stroke-linejoin="round"/></svg><div style="left:1686.7px;top:1040.2px;width:322.3px;height:48.1px;background:linear-gradient(#363636,#303030);border-radius:8px;box-shadow:inset 0 0 0 1.2px #1d1d1d, 0 1px 0 #161616;"></div><div class="t" style="left:1703.3px;top:1054px;font-size:18px;line-height:18px;color:#f6f6f6;transform:scale(0.9928,1.04);transform-origin:0 0;">Portable Network Graphic (*.png)</div><svg style="left:1973.5px;top:1058.5px;" width="20" height="12" viewBox="0 0 20 12"><path d="M1 1.5 L19 1.5 L10 10.5Z" fill="#f0f0f0"/></svg><div style="left:2010.7px;top:1040.2px;width:51px;height:48.1px;background:linear-gradient(#363636,#303030);border-radius:8px;box-shadow:inset 0 0 0 1.2px #1d1d1d, 0 1px 0 #161616;"></div><svg style="left:2024px;top:1052.5px;" width="24" height="24" viewBox="0 0 24 24"><g transform="translate(12 12)"><rect x="-1.9" y="-10.5" width="3.8" height="6" transform="rotate(0)" fill="#f0f0f0"/><rect x="-1.9" y="-10.5" width="3.8" height="6" transform="rotate(45)" fill="#f0f0f0"/><rect x="-1.9" y="-10.5" width="3.8" height="6" transform="rotate(90)" fill="#f0f0f0"/><rect x="-1.9" y="-10.5" width="3.8" height="6" transform="rotate(135)" fill="#f0f0f0"/><rect x="-1.9" y="-10.5" width="3.8" height="6" transform="rotate(180)" fill="#f0f0f0"/><rect x="-1.9" y="-10.5" width="3.8" height="6" transform="rotate(225)" fill="#f0f0f0"/><rect x="-1.9" y="-10.5" width="3.8" height="6" transform="rotate(270)" fill="#f0f0f0"/><rect x="-1.9" y="-10.5" width="3.8" height="6" transform="rotate(315)" fill="#f0f0f0"/><circle r="5.6" fill="none" stroke="#f0f0f0" stroke-width="3.6"/></g></svg><div style="left:1416.7px;top:1097.7px;width:645px;height:48px;background:linear-gradient(#343434,#2f2f2f);border-radius:8px;box-shadow:inset 0 0 0 1.2px #1c1c1c, 0 1px 0 #161616;"></div><div class="t" style="left:1239.5px;width:1000px;text-align:center;top:1110px;font-size:18px;line-height:18px;color:#f6f6f6;transform:scale(1,1.04);transform-origin:50% 0;">Export</div><svg style="left:0px;top:1160px;" width="2080" height="60" viewBox="0 1160 2080 60"><rect x="1.2" y="1165" width="48.8" height="48" fill="#fff"/><circle cx="25.3" cy="1189.3" r="14.2" fill="none" stroke="#b5b5b5" stroke-width="3"/><path d="M5.5 1169.5 L45.5 1209 M45.5 1169.5 L5.5 1209" stroke="#c8102e" stroke-width="3" stroke-linecap="round"/><rect x="50.3" y="1165" width="49.6" height="48" fill="#000"/><rect x="100.4" y="1165" width="48.8" height="48" fill="#fff"/><rect x="150.2" y="1190.2" width="23.4" height="22.8" fill="#1a1a1a"/><rect x="200.10" y="1190.2" width="23.4" height="22.6" fill="#4d4d4d"/><rect x="224.89" y="1190.2" width="23.4" height="22.6" fill="#666666"/><rect x="249.68" y="1190.2" width="23.4" height="22.6" fill="#808080"/><rect x="274.47" y="1190.2" width="23.4" height="22.6" fill="#999999"/><rect x="299.26" y="1190.2" width="23.4" height="22.6" fill="#b3b3b3"/><rect x="324.05" y="1190.2" width="23.4" height="22.6" fill="#cccccc"/><rect x="348.84" y="1190.2" width="23.4" height="22.6" fill="#e6e6e6"/><rect x="373.63" y="1190.2" width="23.4" height="22.6" fill="#ececec"/><rect x="398.42" y="1190.2" width="23.4" height="22.6" fill="#f2f2f2"/><rect x="423.21" y="1190.2" width="23.4" height="22.6" fill="#f9f9f9"/><rect x="448.00" y="1190.2" width="23.4" height="22.6" fill="#800000"/><rect x="472.79" y="1190.2" width="23.4" height="22.6" fill="#ff0000"/><rect x="497.58" y="1190.2" width="23.4" height="22.6" fill="#808000"/><rect x="522.37" y="1190.2" width="23.4" height="22.6" fill="#ffff00"/><rect x="547.16" y="1190.2" width="23.4" height="22.6" fill="#008000"/><rect x="571.95" y="1190.2" width="23.4" height="22.6" fill="#00ff00"/><rect x="596.74" y="1190.2" width="23.4" height="22.6" fill="#008080"/><rect x="621.53" y="1190.2" width="23.4" height="22.6" fill="#00ffff"/><rect x="646.32" y="1190.2" width="23.4" height="22.6" fill="#000080"/><rect x="671.11" y="1190.2" width="23.4" height="22.6" fill="#0000ff"/><rect x="695.90" y="1190.2" width="23.4" height="22.6" fill="#800080"/><rect x="720.69" y="1190.2" width="23.4" height="22.6" fill="#ff00ff"/><rect x="745.48" y="1190.2" width="23.4" height="22.6" fill="#2b0000"/><rect x="770.27" y="1190.2" width="23.4" height="22.6" fill="#550000"/><rect x="795.06" y="1190.2" width="23.4" height="22.6" fill="#800000"/><rect x="819.85" y="1190.2" width="23.4" height="22.6" fill="#aa0000"/><rect x="844.64" y="1190.2" width="23.4" height="22.6" fill="#d40000"/><rect x="869.43" y="1190.2" width="23.4" height="22.6" fill="#ff0000"/><rect x="894.22" y="1190.2" width="23.4" height="22.6" fill="#ff2a2a"/><rect x="919.01" y="1190.2" width="23.4" height="22.6" fill="#ff5555"/><rect x="943.80" y="1190.2" width="23.4" height="22.6" fill="#ff8080"/><rect x="968.59" y="1190.2" width="23.4" height="22.6" fill="#ffaaaa"/><rect x="993.38" y="1190.2" width="23.4" height="22.6" fill="#ffd5d5"/><rect x="1018.17" y="1190.2" width="23.4" height="22.6" fill="#280b0b"/><rect x="1042.96" y="1190.2" width="23.4" height="22.6" fill="#501616"/><rect x="1067.75" y="1190.2" width="23.4" height="22.6" fill="#782121"/><rect x="1092.54" y="1190.2" width="23.4" height="22.6" fill="#a02c2c"/><rect x="1117.33" y="1190.2" width="23.4" height="22.6" fill="#c83737"/><rect x="1142.12" y="1190.2" width="23.4" height="22.6" fill="#d35f5f"/><rect x="1166.91" y="1190.2" width="23.4" height="22.6" fill="#de8787"/><rect x="1191.70" y="1190.2" width="23.4" height="22.6" fill="#e9afaf"/><rect x="1216.49" y="1190.2" width="23.4" height="22.6" fill="#f4d7d7"/><rect x="1241.28" y="1190.2" width="23.4" height="22.6" fill="#241c1c"/><rect x="1266.07" y="1190.2" width="23.4" height="22.6" fill="#483737"/><rect x="1290.86" y="1190.2" width="23.4" height="22.6" fill="#6c5353"/><rect x="1315.65" y="1190.2" width="23.4" height="22.6" fill="#916f6f"/><rect x="1340.44" y="1190.2" width="23.4" height="22.6" fill="#ac9393"/><rect x="1365.23" y="1190.2" width="23.4" height="22.6" fill="#c8b7b7"/><rect x="1390.02" y="1190.2" width="23.4" height="22.6" fill="#e3dbdb"/><rect x="1414.81" y="1190.2" width="23.4" height="22.6" fill="#2b1100"/><rect x="1439.60" y="1190.2" width="23.4" height="22.6" fill="#552200"/><rect x="1464.39" y="1190.2" width="23.4" height="22.6" fill="#803300"/><rect x="1489.18" y="1190.2" width="23.4" height="22.6" fill="#aa4400"/><rect x="1513.97" y="1190.2" width="23.4" height="22.6" fill="#d45500"/><rect x="1538.76" y="1190.2" width="23.4" height="22.6" fill="#ff6600"/><rect x="1563.55" y="1190.2" width="23.4" height="22.6" fill="#ff7f2a"/><rect x="1588.34" y="1190.2" width="23.4" height="22.6" fill="#ff9955"/><rect x="1613.13" y="1190.2" width="23.4" height="22.6" fill="#ffb380"/><rect x="1637.92" y="1190.2" width="23.4" height="22.6" fill="#ffccaa"/><rect x="1662.71" y="1190.2" width="23.4" height="22.6" fill="#ffe6d5"/><rect x="1687.50" y="1190.2" width="23.4" height="22.6" fill="#28170b"/><rect x="1712.29" y="1190.2" width="23.4" height="22.6" fill="#502d16"/><rect x="1737.08" y="1190.2" width="23.4" height="22.6" fill="#784421"/><rect x="1761.87" y="1190.2" width="23.4" height="22.6" fill="#a05a2c"/><rect x="1786.66" y="1190.2" width="23.4" height="22.6" fill="#c87137"/><rect x="1811.45" y="1190.2" width="23.4" height="22.6" fill="#d38d5f"/><rect x="1836.24" y="1190.2" width="23.4" height="22.6" fill="#deaa87"/><rect x="1861.03" y="1190.2" width="23.4" height="22.6" fill="#e9c6af"/><rect x="1885.82" y="1190.2" width="23.4" height="22.6" fill="#f4e3d7"/><rect x="1910.61" y="1190.2" width="23.4" height="22.6" fill="#241f1c"/><path d="M1968.5 1194 L1977.5 1185 L1986.5 1194" fill="none" stroke="#f0f0f0" stroke-width="2.4"/><path d="M2013.5 1183.5 L2022.5 1192.5 L2031.5 1183.5" fill="none" stroke="#f0f0f0" stroke-width="2.4"/></svg><div style="left:2046.5px;top:1174.5px;width:28px;height:39.4px;background:#303030;border-radius:7px;box-shadow:inset 0 0 0 1.2px #1a1a1a;"></div><div style="left:2050.5px;top:1186.2px;width:20.5px;height:2.6px;background:#f0f0f0;"></div><div style="left:2050.5px;top:1193.6px;width:20.5px;height:2.6px;background:#f0f0f0;"></div><div style="left:2050.5px;top:1201px;width:20.5px;height:2.6px;background:#f0f0f0;"></div><div class="t" style="right:2040.7px;top:1218px;font-size:18px;line-height:18px;color:#f6f6f6;transform:scale(1,1.04);transform-origin:100% 0;">Fill:</div><div class="t" style="right:2040.7px;top:1242px;font-size:18px;line-height:18px;color:#f6f6f6;transform:scale(1,1.04);transform-origin:100% 0;">Stroke:</div><div style="left:81.3px;top:1216.4px;width:73.8px;height:23.5px;background:#22f0f3;border-radius:4px;box-shadow:0 0 0 0.8px #1a1a1a;"></div><div class="t" style="left:97px;top:1242px;font-size:18px;line-height:18px;color:#f6f6f6;transform:scale(1,1.04);transform-origin:0 0;font-style:italic;">None</div><div class="t" style="left:171.5px;top:1242px;font-size:18px;line-height:18px;color:#f6f6f6;transform:scale(1,1.04);transform-origin:0 0;">1.33</div><div class="t" style="left:218.8px;top:1230px;font-size:18px;line-height:18px;color:#f6f6f6;transform:scale(1,1.04);transform-origin:0 0;">O:</div><div style="left:240px;top:1216.8px;width:103.6px;height:52px;background:linear-gradient(#2b2b2b,#2d2d2d);border-radius:8px;box-shadow:inset 0 0 0 1.2px #1e1e1e, 0 1px 0 rgba(255,255,255,0.03);"></div><div class="t" style="left:250px;top:1230px;font-size:18px;line-height:18px;color:#f6f6f6;transform:scale(1,1.04);transform-origin:0 0;">100</div><div style="left:293.6px;top:1217.8px;width:1px;height:50px;background:#252525;"></div><div style="left:318.1px;top:1217.8px;width:1px;height:50px;background:#252525;"></div><div style="left:297.15000000000003px;top:1241.3px;width:18.4px;height:3px;background:#f2f2f2;box-shadow:0 -1px 0 rgba(0,0,0,0.8);"></div><div style="left:321.85px;top:1241.3px;width:18.2px;height:3px;background:#585858;box-shadow:0 -1px 0 rgba(0,0,0,0.8);"></div><div style="left:329.45000000000005px;top:1233.2px;width:3px;height:19.2px;background:#585858;box-shadow:0 -1px 0 rgba(0,0,0,0.8);"></div><div style="left:380.3px;top:1231px;width:4.6px;height:19px;background:#2f6fe0;border-radius:1px;"></div><div class="t" style="left:393.5px;top:1230px;font-size:18px;line-height:18px;color:#f6f6f6;transform:scale(1,1.04);transform-origin:0 0;">Layer 1</div><svg style="left:483px;top:1229px;" width="24" height="24" viewBox="0 0 24 24"><path d="M2.2 13.6 Q11.5 4.4 20.8 13.6 Q11.5 22.6 2.2 13.6Z" fill="none" stroke="#f0f0f0" stroke-width="2.3"/><circle cx="11.5" cy="13.8" r="2.9" fill="#f0f0f0"/><path d="M11.5 6.5 V2.8 M5.3 8.3 L3.2 5.3 M17.7 8.3 L19.8 5.3" stroke="#f0f0f0" stroke-width="2.2" fill="none"/></svg><svg style="left:537px;top:1228px;" width="24" height="26" viewBox="0 0 24 26"><rect x="2.2" y="11.3" width="14.6" height="11.6" rx="1" fill="#e6e6e6"/><path d="M12.6 11.5 V7 a3.9 3.9 0 0 1 7.8 0 V10" fill="none" stroke="#f0f0f0" stroke-width="2.5"/></svg><div style="left:574px;top:1221px;width:1px;height:38px;background:#2c2c2c;"></div><div class="t" style="left:584.3px;top:1230px;font-size:18px;line-height:18px;color:#f6f6f6;transform:scale(0.9861,1.04);transform-origin:0 0;"><b>Ctrl</b>: Select inside groups, Move one axis only; <b>Shift</b>: Add to selection</div><svg style="left:1412px;top:1230px;" width="16" height="22" viewBox="0 0 16 22"><path d="M13 2 L13 20 L3.5 11Z" fill="#e6e6e6"/></svg><div style="left:1447.3px;top:1216.8px;width:100.7px;height:52px;background:linear-gradient(#363636,#2f2f2f);border-radius:8px;box-shadow:inset 0 0 0 1.2px #1d1d1d;"></div><div class="t" style="left:1464.2px;top:1233px;font-size:14px;line-height:14px;color:#f6f6f6;transform:scale(1,1.04);transform-origin:0 0;font-family:'DejaVu Sans Mono','Liberation Mono',monospace;">3.3</div><svg style="left:1512.3px;top:1234.5px;" width="20" height="12" viewBox="0 0 20 12"><path d="M1 1.5 L19 1.5 L10 10.5Z" fill="#f0f0f0"/></svg><svg style="left:1567px;top:1230px;" width="16" height="22" viewBox="0 0 16 22"><path d="M3.5 2 L3.5 20 L13 11Z" fill="#e6e6e6"/></svg><div style="left:1602px;top:1221px;width:1px;height:38px;background:#2c2c2c;"></div><div class="t" style="left:1617.6px;top:1215px;font-size:18px;line-height:18px;color:#f6f6f6;transform:scale(1,1.04);transform-origin:0 0;">X:</div><div class="t" style="left:1617.6px;top:1234px;font-size:18px;line-height:18px;color:#f6f6f6;transform:scale(1,1.04);transform-origin:0 0;">Y:</div><div class="t" style="right:386.79999999999995px;top:1215px;font-size:18px;line-height:18px;color:#f6f6f6;transform:scale(1,1.04);transform-origin:100% 0;">4476.92</div><div class="t" style="right:386.79999999999995px;top:1234px;font-size:18px;line-height:18px;color:#f6f6f6;transform:scale(1,1.04);transform-origin:100% 0;">1563.63</div><div class="t" style="left:1728px;top:1230px;font-size:18px;line-height:18px;color:#f6f6f6;transform:scale(1,1.04);transform-origin:0 0;">Z:</div><div style="left:1743.4px;top:1216.8px;width:136.2px;height:52px;background:linear-gradient(#2b2b2b,#2d2d2d);border-radius:8px;box-shadow:inset 0 0 0 1.2px #1e1e1e, 0 1px 0 rgba(255,255,255,0.03);"></div><div class="t" style="left:1758.3px;top:1230px;font-size:18px;line-height:18px;color:#f6f6f6;transform:scale(1,1.04);transform-origin:0 0;">24%</div><div style="left:1815.0px;top:1217.8px;width:1px;height:50px;background:#252525;"></div><div style="left:1845.4px;top:1217.8px;width:1px;height:50px;background:#252525;"></div><div style="left:1821.5px;top:1241.3px;width:18.4px;height:3px;background:#f2f2f2;box-shadow:0 -1px 0 rgba(0,0,0,0.8);"></div><div style="left:1852.1000000000001px;top:1241.3px;width:18.2px;height:3px;background:#f2f2f2;box-shadow:0 -1px 0 rgba(0,0,0,0.8);"></div><div style="left:1859.7px;top:1233.2px;width:3px;height:19.2px;background:#f2f2f2;box-shadow:0 -1px 0 rgba(0,0,0,0.8);"></div><div class="t" style="left:1894.6px;top:1230px;font-size:18px;line-height:18px;color:#f6f6f6;transform:scale(1,1.04);transform-origin:0 0;">R:</div><div style="left:1912.5px;top:1216.8px;width:146px;height:52px;background:linear-gradient(#2b2b2b,#2d2d2d);border-radius:8px;box-shadow:inset 0 0 0 1.2px #1e1e1e, 0 1px 0 rgba(255,255,255,0.03);"></div><div class="t" style="left:1931.8px;top:1230px;font-size:18px;line-height:18px;color:#f6f6f6;transform:scale(1,1.04);transform-origin:0 0;">0.00°</div><div style="left:1994.0px;top:1217.8px;width:1px;height:50px;background:#252525;"></div><div style="left:2025.0px;top:1217.8px;width:1px;height:50px;background:#252525;"></div><div style="left:2000.8px;top:1241.3px;width:18.4px;height:3px;background:#f2f2f2;box-shadow:0 -1px 0 rgba(0,0,0,0.8);"></div><div style="left:2032.0px;top:1241.3px;width:18.2px;height:3px;background:#f2f2f2;box-shadow:0 -1px 0 rgba(0,0,0,0.8);"></div><div style="left:2039.6px;top:1233.2px;width:3px;height:19.2px;background:#f2f2f2;box-shadow:0 -1px 0 rgba(0,0,0,0.8);"></div><div style="left:2px;top:427.7px;width:44px;height:1px;background:#2e2e2e;"></div><div style="left:2px;top:662.3px;width:44px;height:1px;background:#2e2e2e;"></div><div style="left:2px;top:850.8px;width:44px;height:1px;background:#2e2e2e;"></div><div style="left:2px;top:1039px;width:44px;height:1px;background:#2e2e2e;"></div><svg style="left:0px;top:0px;filter:drop-shadow(0 1px 0 rgba(0,0,0,0.75));" width="2100" height="1400" viewBox="0 0 2100 1400"><defs><linearGradient id="selg" x1="0" y1="0" x2="0" y2="1"><stop offset="0" stop-color="#1f4c89"/><stop offset="1" stop-color="#264470"/></linearGradient><linearGradient id="grd1" x1="0" y1="0" x2="1" y2="1"><stop offset="0" stop-color="#1a8fe8"/><stop offset="0.45" stop-color="#5ab4f2"/><stop offset="1" stop-color="#ffffff"/></linearGradient><radialGradient id="grd2" cx="0.5" cy="0.5" r="0.6"><stop offset="0" stop-color="#2aa0f0"/><stop offset="0.45" stop-color="#17609a"/><stop offset="1" stop-color="#262a2e"/></radialGradient><linearGradient id="tg3" x1="0" y1="0" x2="1" y2="0"><stop offset="0" stop-color="#1e9bf0"/><stop offset="1" stop-color="#e8f4ff"/></linearGradient></defs><g transform="translate(10 170) scale(0.100000)"><path d="M115 195 H215 L265 245 V355 H115Z" fill="none" stroke="#f2f2f2" stroke-width="30" stroke-linejoin="round" stroke-linecap="round"/><path d="M205 185 V255 H275" fill="none" stroke="#f2f2f2" stroke-width="26" stroke-linejoin="miter"/><path d="M295 140 L306 172 L340 173 L313 193 L323 226 L295 206 L267 226 L277 193 L250 173 L284 172Z" fill="#10a010" stroke="none" stroke-width="0" /><path d="M655 340 V165 H720 L740 195 H840 V215" fill="none" stroke="#f2f2f2" stroke-width="30" stroke-linejoin="round" stroke-linecap="round"/><path d="M655 160 H722 L742 188 H852 V222 H655Z" fill="#f2f2f2" stroke="none" stroke-width="0" /><path d="M700 262 H880 L855 352 H660Z" fill="#e6e6e6" stroke="#f2f2f2" stroke-width="8" stroke-linejoin="round" stroke-linecap="round"/><path d="M690 240 L665 330" fill="none" stroke="#353535" stroke-width="16" /><path d="M1282 140 H1318 V215 H1355 L1300 270 L1245 215 H1282Z" fill="#10a010" stroke="none" stroke-width="0" /><path d="M1200 300 L1235 255 H1250 M1350 255 H1365 L1400 300" fill="none" stroke="#f2f2f2" stroke-width="28" stroke-linejoin="round" stroke-linecap="round"/><rect x="1198" y="295" width="206" height="75" rx="6" fill="#f2f2f2" stroke="none" stroke-width="0" /><path d="M1258 318 V335 H1342 V318" fill="none" stroke="#353535" stroke-width="14" /><rect x="1782" y="150" width="116" height="32" rx="4" fill="#f2f2f2" stroke="none" stroke-width="0" /><rect x="1735" y="198" width="210" height="88" rx="16" fill="#c4c4c4" stroke="none" stroke-width="0" /><rect x="1735" y="198" width="210" height="30" rx="12" fill="#e0e0e0" stroke="none" stroke-width="0" /><rect x="1780" y="268" width="120" height="75" rx="4" fill="#e6e6e6" stroke="#353535" stroke-width="10" /></g><g transform="translate(230 170) scale(0.100000)"><path d="M325 225 V150 H420 L475 205 V342 H325 V290" fill="none" stroke="#f2f2f2" stroke-width="30" stroke-linejoin="round" stroke-linecap="round"/><path d="M412 145 V212 H480" fill="none" stroke="#f2f2f2" stroke-width="22" stroke-linejoin="miter"/><path d="M280 238 H365 V212 L412 255 L365 298 V272 H280Z" fill="#10a010" stroke="none" stroke-width="0" /><path d="M970 235 V205 L915 150 H822 V342 H970 V305" fill="none" stroke="#f2f2f2" stroke-width="30" stroke-linejoin="round" stroke-linecap="round"/><path d="M908 145 V212 H975" fill="none" stroke="#f2f2f2" stroke-width="22" stroke-linejoin="miter"/><path d="M908 253 H995 V227 L1042 270 L995 313 V287 H908Z" fill="#10a010" stroke="none" stroke-width="0" /><path d="M1620 212 H1690 Q1750 212 1750 265 Q1750 318 1700 318" fill="none" stroke="#9a9a9a" stroke-width="30" stroke-linecap="round"/><path d="M1565 225 L1625 172 V280Z" fill="#9a9a9a" stroke="none" stroke-width="0" /></g><g transform="translate(430 170) scale(0.100000)"><path d="M250 212 H180 Q120 212 120 265 Q120 318 170 318" fill="none" stroke="#9a9a9a" stroke-width="30" stroke-linecap="round"/><path d="M307 225 L247 172 V280Z" fill="#9a9a9a" stroke="none" stroke-width="0" /><rect x="830" y="138" width="165" height="162" rx="6" fill="#f2f2f2" stroke="none" stroke-width="0" /><rect x="893" y="203" width="190" height="182" rx="6" fill="#353535" stroke="none" stroke-width="0" /><rect x="907" y="217" width="163" height="155" rx="6" fill="#e6e6e6" stroke="none" stroke-width="0" /><path d="M1410 150 L1548 315 M1575 150 L1437 315" fill="none" stroke="#f2f2f2" stroke-width="26" stroke-linecap="round"/><circle cx="1425" cy="320" r="40" fill="none" stroke="#f2f2f2" stroke-width="28" /><circle cx="1555" cy="320" r="40" fill="none" stroke="#f2f2f2" stroke-width="28" /></g><g transform="translate(600 170) scale(0.100000)"><rect x="218" y="165" width="195" height="198" rx="8" fill="none" stroke="#f2f2f2" stroke-width="18" /><rect x="268" y="150" width="95" height="42" rx="8" fill="#f2f2f2" stroke="none" stroke-width="0" /><path d="M255 212 H375 V310 L345 340 H255Z" fill="#e6e6e6" stroke="#353535" stroke-width="10" /><circle cx="1065" cy="245" r="108" fill="#f2f2f2" stroke="none" stroke-width="0" /><path d="M1135 318 L1178 360" fill="none" stroke="#f2f2f2" stroke-width="36" stroke-linecap="round"/><rect x="1000.0" y="180" width="14" height="14" rx="0" fill="#222" stroke="none" stroke-width="0" /><rect x="1000.0" y="296" width="14" height="14" rx="0" fill="#222" stroke="none" stroke-width="0" /><rect x="1019.3333333333334" y="180" width="14" height="14" rx="0" fill="#222" stroke="none" stroke-width="0" /><rect x="1019.3333333333334" y="296" width="14" height="14" rx="0" fill="#222" stroke="none" stroke-width="0" /><rect x="1000" y="199.33333333333334" width="14" height="14" rx="0" fill="#222" stroke="none" stroke-width="0" /><rect x="1116" y="199.33333333333334" width="14" height="14" rx="0" fill="#222" stroke="none" stroke-width="0" /><rect x="1038.6666666666667" y="180" width="14" height="14" rx="0" fill="#222" stroke="none" stroke-width="0" /><rect x="1038.6666666666667" y="296" width="14" height="14" rx="0" fill="#222" stroke="none" stroke-width="0" /><rect x="1000" y="218.66666666666666" width="14" height="14" rx="0" fill="#222" stroke="none" stroke-width="0" /><rect x="1116" y="218.66666666666666" width="14" height="14" rx="0" fill="#222" stroke="none" stroke-width="0" /><rect x="1058.0" y="180" width="14" height="14" rx="0" fill="#222" stroke="none" stroke-width="0" /><rect x="1058.0" y="296" width="14" height="14" rx="0" fill="#222" stroke="none" stroke-width="0" /><rect x="1000" y="238.0" width="14" height="14" rx="0" fill="#222" stroke="none" stroke-width="0" /><rect x="1116" y="238.0" width="14" height="14" rx="0" fill="#222" stroke="none" stroke-width="0" /><rect x="1077.3333333333333" y="180" width="14" height="14" rx="0" fill="#222" stroke="none" stroke-width="0" /><rect x="1077.3333333333333" y="296" width="14" height="14" rx="0" fill="#222" stroke="none" stroke-width="0" /><rect x="1000" y="257.3333333333333" width="14" height="14" rx="0" fill="#222" stroke="none" stroke-width="0" /><rect x="1116" y="257.3333333333333" width="14" height="14" rx="0" fill="#222" stroke="none" stroke-width="0" /><rect x="1096.6666666666667" y="180" width="14" height="14" rx="0" fill="#222" stroke="none" stroke-width="0" /><rect x="1096.6666666666667" y="296" width="14" height="14" rx="0" fill="#222" stroke="none" stroke-width="0" /><rect x="1000" y="276.66666666666663" width="14" height="14" rx="0" fill="#222" stroke="none" stroke-width="0" /><rect x="1116" y="276.66666666666663" width="14" height="14" rx="0" fill="#222" stroke="none" stroke-width="0" /><rect x="1116.0" y="180" width="14" height="14" rx="0" fill="#222" stroke="none" stroke-width="0" /><rect x="1116.0" y="296" width="14" height="14" rx="0" fill="#222" stroke="none" stroke-width="0" /><circle cx="1608" cy="245" r="108" fill="#f2f2f2" stroke="none" stroke-width="0" /><path d="M1678 318 L1720 360" fill="none" stroke="#f2f2f2" stroke-width="36" stroke-linecap="round"/><circle cx="1580" cy="225" r="33" fill="none" stroke="#222" stroke-width="16" /><rect x="1597" y="242" width="72" height="68" rx="0" fill="#222" stroke="#f2f2f2" stroke-width="10" /></g><g transform="translate(780 168) scale(0.152381)"><circle cx="228" cy="175" r="72" fill="#f2f2f2" stroke="none" stroke-width="0" /><path d="M275 225 L298 245" fill="none" stroke="#f2f2f2" stroke-width="24" stroke-linecap="round"/><rect x="203" y="130" width="48" height="88" rx="2" fill="#e6e6e6" stroke="#222" stroke-width="9" /><path d="M520 130 V105 H545" fill="none" stroke="#a8a8a8" stroke-width="7" /><path d="M660 130 V105 H635" fill="none" stroke="#a8a8a8" stroke-width="7" /><path d="M520 221 V246 H545" fill="none" stroke="#a8a8a8" stroke-width="7" /><path d="M660 221 V246 H635" fill="none" stroke="#a8a8a8" stroke-width="7" /><rect x="540" y="126" width="100" height="102" rx="2" fill="none" stroke="#f2f2f2" stroke-width="8" /><path d="M590 152 V202 M565 177 H615" fill="none" stroke="#f2f2f2" stroke-width="9" /><rect x="997" y="112" width="95" height="86" rx="3" fill="#f2f2f2" stroke="none" stroke-width="0" /><rect x="1037" y="152" width="112" height="102" rx="0" fill="#353535" stroke="none" stroke-width="0" /><rect x="1045" y="160" width="96" height="86" rx="0" fill="#0a9c0a" stroke="none" stroke-width="0" /><rect x="1350" y="103" width="95" height="86" rx="3" fill="#f2f2f2" stroke="none" stroke-width="0" /><rect x="1392" y="142" width="112" height="120" rx="0" fill="#353535" stroke="none" stroke-width="0" /><rect x="1400" y="150" width="96" height="106" rx="0" fill="#f2f2f2" stroke="none" stroke-width="0" /><rect x="1705" y="103" width="95" height="86" rx="3" fill="#f2f2f2" stroke="none" stroke-width="0" /><rect x="1747" y="142" width="112" height="120" rx="0" fill="#353535" stroke="none" stroke-width="0" /><rect x="1755" y="150" width="96" height="106" rx="0" fill="#f2f2f2" stroke="none" stroke-width="0" /><rect x="1422" y="195" width="52" height="38" rx="3" fill="#222" stroke="none" stroke-width="0" /><path d="M1434 197 V183 a14 14 0 0 1 28 0 V197" fill="none" stroke="#222" stroke-width="9" /><rect x="1775" y="200" width="52" height="36" rx="3" fill="#222" stroke="none" stroke-width="0" /><path d="M1801 200 V182 a13 13 0 0 1 26 0 V190" fill="none" stroke="#222" stroke-width="9" /></g><g transform="translate(1090 168) scale(0.152381)"><rect x="158" y="103" width="30" height="30" rx="0" fill="#10a010" stroke="none" stroke-width="0" /><rect x="283" y="103" width="30" height="30" rx="0" fill="#10a010" stroke="none" stroke-width="0" /><rect x="158" y="228" width="30" height="30" rx="0" fill="#10a010" stroke="none" stroke-width="0" /><rect x="283" y="228" width="30" height="30" rx="0" fill="#10a010" stroke="none" stroke-width="0" /><path d="M218 168 H276 V230 H218Z" fill="#e6e6e6" stroke="none" stroke-width="0" /><circle cx="210" cy="175" r="39" fill="#353535" stroke="none" stroke-width="0" /><circle cx="210" cy="175" r="33" fill="#e6e6e6" stroke="none" stroke-width="0" /><path d="M580 160 H640 V215 H580Z" fill="#a0a0a0" stroke="none" stroke-width="0" /><circle cx="570" cy="165" r="39" fill="#353535" stroke="none" stroke-width="0" /><circle cx="570" cy="165" r="33" fill="#e6e6e6" stroke="none" stroke-width="0" /><rect x="517" y="107" width="31" height="31" rx="0" fill="#353535" stroke="none" stroke-width="0" /><rect x="522" y="112" width="21" height="21" rx="0" fill="#f2f2f2" stroke="none" stroke-width="0" /><rect x="592" y="107" width="31" height="31" rx="0" fill="#353535" stroke="none" stroke-width="0" /><rect x="597" y="112" width="21" height="21" rx="0" fill="#f2f2f2" stroke="none" stroke-width="0" /><rect x="632" y="127" width="31" height="31" rx="0" fill="#353535" stroke="none" stroke-width="0" /><rect x="637" y="132" width="21" height="21" rx="0" fill="#f2f2f2" stroke="none" stroke-width="0" /><rect x="517" y="192" width="31" height="31" rx="0" fill="#353535" stroke="none" stroke-width="0" /><rect x="522" y="197" width="21" height="21" rx="0" fill="#f2f2f2" stroke="none" stroke-width="0" /><rect x="555" y="222" width="31" height="31" rx="0" fill="#353535" stroke="none" stroke-width="0" /><rect x="560" y="227" width="21" height="21" rx="0" fill="#f2f2f2" stroke="none" stroke-width="0" /><rect x="632" y="222" width="31" height="31" rx="0" fill="#353535" stroke="none" stroke-width="0" /><rect x="637" y="227" width="21" height="21" rx="0" fill="#f2f2f2" stroke="none" stroke-width="0" /><path d="M1000 215 V106 H1115" fill="none" stroke="#f2f2f2" stroke-width="8" /><path d="M1145 122 L1072 198" fill="none" stroke="#f2f2f2" stroke-width="26" stroke-linecap="round"/><path d="M1076 195 L1052 218" fill="none" stroke="#353535" stroke-width="30" /><path d="M1060 205 L1045 222" fill="none" stroke="#f2f2f2" stroke-width="22" /><path d="M1048 218 Q1040 245 1005 250 Q1020 225 1028 210Z" fill="#1e9bf0" stroke="none" stroke-width="0" /><text x="1430" y="241" text-anchor="middle" font-family="Liberation Serif, serif" font-weight="bold" font-size="181" fill="#f2f2f2" textLength="122" lengthAdjust="spacingAndGlyphs">T</text><path d="M1738 122 H1826 L1798 150 H1710Z" fill="#1e9bf0" stroke="none" stroke-width="0" /><path d="M1757 170 H1845 L1818 198 H1730Z" fill="#8ecbf5" stroke="none" stroke-width="0" /><path d="M1776 218 H1864 L1837 246 H1749Z" fill="#f2f2f2" stroke="none" stroke-width="0" /></g><g transform="translate(1390 168) scale(0.152381)"><rect x="96" y="104" width="152" height="150" rx="2" fill="none" stroke="#f2f2f2" stroke-width="8" /><rect x="112" y="122" width="118" height="20" rx="0" fill="#0fb60f" stroke="none" stroke-width="0" /><path d="M157 170 L122 198 L157 227 M187 170 L222 198 L187 227" fill="none" stroke="#f2f2f2" stroke-width="10" /><rect x="450" y="104" width="152" height="150" rx="2" fill="none" stroke="#f2f2f2" stroke-width="8" /><rect x="467" y="122" width="118" height="20" rx="0" fill="#ff1aa0" stroke="none" stroke-width="0" /><path d="M507 158 Q492 158 492 172 V186 Q492 197 481 198 Q492 199 492 210 V224 Q492 238 507 238 M545 158 Q560 158 560 172 V186 Q560 197 571 198 Q560 199 560 210 V224 Q560 238 545 238" fill="none" stroke="#f2f2f2" stroke-width="9" /><rect x="813" y="112" width="8" height="126" rx="0" fill="#12b012" stroke="none" stroke-width="0" /><rect x="842" y="112" width="64" height="28" rx="0" fill="#f2f2f2" stroke="none" stroke-width="0" /><rect x="842" y="161" width="96" height="28" rx="0" fill="#f2f2f2" stroke="none" stroke-width="0" /><rect x="842" y="210" width="57" height="28" rx="0" fill="#f2f2f2" stroke="none" stroke-width="0" /></g><g transform="translate(1570 170) scale(0.052381)"><path d="M540 655 H395 V312 H605 L690 390 V565" fill="none" stroke="#f2f2f2" stroke-width="60" stroke-linejoin="miter"/><path d="M575 550 L665 660" fill="none" stroke="#353535" stroke-width="100" /><circle cx="530" cy="490" r="78" fill="#353535" stroke="none" stroke-width="0" /><circle cx="530" cy="490" r="46" fill="none" stroke="#f2f2f2" stroke-width="46" /><path d="M530 490 L480 415" fill="none" stroke="#353535" stroke-width="44" /><path d="M565 540 L650 645" fill="none" stroke="#f2f2f2" stroke-width="62" /><path d="M640 632 L680 682 H590Z" fill="#f2f2f2" stroke="none" stroke-width="0" /><path d="M1495 410 L1650 565" fill="none" stroke="#f2f2f2" stroke-width="74" /><circle cx="1440" cy="352" r="52" fill="none" stroke="#f2f2f2" stroke-width="62" /><path d="M1440 352 L1385 285" fill="none" stroke="#353535" stroke-width="56" /><circle cx="1700" cy="622" r="52" fill="none" stroke="#f2f2f2" stroke-width="62" /><path d="M1700 622 L1760 690" fill="none" stroke="#353535" stroke-width="56" /><path d="M1385 668 L1735 325" fill="none" stroke="#353535" stroke-width="92" /><path d="M1385 668 L1515 545" fill="none" stroke="#f2f2f2" stroke-width="64" stroke-linecap="round"/><path d="M1515 545 L1705 360" fill="none" stroke="#f2f2f2" stroke-width="26" /><path d="M1695 362 L1762 298" fill="none" stroke="#f2f2f2" stroke-width="62" /></g><g transform="translate(1680 168) scale(0.190476)"><path d="M1622 88 A56 56 0 0 1 1622 202" fill="none" stroke="#f2f2f2" stroke-width="21" /><circle cx="1597" cy="95" r="11" fill="#12b012" stroke="none" stroke-width="0" /><circle cx="1597" cy="193" r="11" fill="#12b012" stroke="none" stroke-width="0" /><path d="M1592 128 L1576 140 L1594 150 L1578 162" fill="none" stroke="#f2f2f2" stroke-width="7" /><path d="M137 414 H227 V462" fill="none" stroke="#f2f2f2" stroke-width="11" /><path d="M137 440 H199 V462" fill="none" stroke="#f2f2f2" stroke-width="8" /><rect x="139" y="497" width="16" height="15" rx="0" fill="#f2f2f2" stroke="none" stroke-width="0" /><rect x="165" y="497" width="16" height="15" rx="0" fill="#f2f2f2" stroke="none" stroke-width="0" /><path d="M187 505 H209" fill="none" stroke="#f2f2f2" stroke-width="13" /><path d="M205 483 L230 505 L205 527Z" fill="#f2f2f2" stroke="none" stroke-width="0" /><path d="M415 414 H465 Q508 414 510 462" fill="none" stroke="#f2f2f2" stroke-width="11" /><path d="M415 440 H455 Q480 440 482 462" fill="none" stroke="#f2f2f2" stroke-width="8" /><rect x="422" y="497" width="16" height="15" rx="0" fill="#f2f2f2" stroke="none" stroke-width="0" /><rect x="448" y="497" width="16" height="15" rx="0" fill="#f2f2f2" stroke="none" stroke-width="0" /><path d="M470 505 H492" fill="none" stroke="#f2f2f2" stroke-width="13" /><path d="M488 483 L513 505 L488 527Z" fill="#f2f2f2" stroke="none" stroke-width="0" /><path d="M703 412 H795 V470" fill="none" stroke="#f2f2f2" stroke-width="7" /><rect x="703" y="425" width="78" height="30" fill="url(#tg3)"/><path d="M703 466 H773" fill="none" stroke="#f2f2f2" stroke-width="7" /><rect x="705" y="497" width="16" height="15" rx="0" fill="#f2f2f2" stroke="none" stroke-width="0" /><rect x="731" y="497" width="16" height="15" rx="0" fill="#f2f2f2" stroke="none" stroke-width="0" /><path d="M753 505 H775" fill="none" stroke="#f2f2f2" stroke-width="13" /><path d="M771 483 L796 505 L771 527Z" fill="#f2f2f2" stroke="none" stroke-width="0" /><path d="M987 412 H1079 V470" fill="none" stroke="#f2f2f2" stroke-width="7" /><path d="M990 428 L1005 440 L990 452 M1012 428 L1027 440 L1012 452 M1034 428 L1049 440 L1034 452" fill="none" stroke="#2aa2f5" stroke-width="6" /><path d="M987 466 H1057" fill="none" stroke="#f2f2f2" stroke-width="7" /><rect x="989" y="497" width="16" height="15" rx="0" fill="#f2f2f2" stroke="none" stroke-width="0" /><rect x="1015" y="497" width="16" height="15" rx="0" fill="#f2f2f2" stroke="none" stroke-width="0" /><path d="M1037 505 H1059" fill="none" stroke="#f2f2f2" stroke-width="13" /><path d="M1055 483 L1080 505 L1055 527Z" fill="#f2f2f2" stroke="none" stroke-width="0" /></g><g transform="translate(10 170) scale(0.100000)"><rect x="98.0" y="748" width="17" height="17" rx="0" fill="#f2f2f2" stroke="none" stroke-width="0" /><rect x="98.0" y="961" width="17" height="17" rx="0" fill="#f2f2f2" stroke="none" stroke-width="0" /><rect x="124.625" y="748" width="17" height="17" rx="0" fill="#f2f2f2" stroke="none" stroke-width="0" /><rect x="124.625" y="961" width="17" height="17" rx="0" fill="#f2f2f2" stroke="none" stroke-width="0" /><rect x="98" y="774.625" width="17" height="17" rx="0" fill="#f2f2f2" stroke="none" stroke-width="0" /><rect x="311" y="774.625" width="17" height="17" rx="0" fill="#f2f2f2" stroke="none" stroke-width="0" /><rect x="151.25" y="748" width="17" height="17" rx="0" fill="#f2f2f2" stroke="none" stroke-width="0" /><rect x="151.25" y="961" width="17" height="17" rx="0" fill="#f2f2f2" stroke="none" stroke-width="0" /><rect x="98" y="801.25" width="17" height="17" rx="0" fill="#f2f2f2" stroke="none" stroke-width="0" /><rect x="311" y="801.25" width="17" height="17" rx="0" fill="#f2f2f2" stroke="none" stroke-width="0" /><rect x="177.875" y="748" width="17" height="17" rx="0" fill="#f2f2f2" stroke="none" stroke-width="0" /><rect x="177.875" y="961" width="17" height="17" rx="0" fill="#f2f2f2" stroke="none" stroke-width="0" /><rect x="98" y="827.875" width="17" height="17" rx="0" fill="#f2f2f2" stroke="none" stroke-width="0" /><rect x="311" y="827.875" width="17" height="17" rx="0" fill="#f2f2f2" stroke="none" stroke-width="0" /><rect x="204.5" y="748" width="17" height="17" rx="0" fill="#f2f2f2" stroke="none" stroke-width="0" /><rect x="204.5" y="961" width="17" height="17" rx="0" fill="#f2f2f2" stroke="none" stroke-width="0" /><rect x="98" y="854.5" width="17" height="17" rx="0" fill="#f2f2f2" stroke="none" stroke-width="0" /><rect x="311" y="854.5" width="17" height="17" rx="0" fill="#f2f2f2" stroke="none" stroke-width="0" /><rect x="231.125" y="748" width="17" height="17" rx="0" fill="#f2f2f2" stroke="none" stroke-width="0" /><rect x="231.125" y="961" width="17" height="17" rx="0" fill="#f2f2f2" stroke="none" stroke-width="0" /><rect x="98" y="881.125" width="17" height="17" rx="0" fill="#f2f2f2" stroke="none" stroke-width="0" /><rect x="311" y="881.125" width="17" height="17" rx="0" fill="#f2f2f2" stroke="none" stroke-width="0" /><rect x="257.75" y="748" width="17" height="17" rx="0" fill="#f2f2f2" stroke="none" stroke-width="0" /><rect x="257.75" y="961" width="17" height="17" rx="0" fill="#f2f2f2" stroke="none" stroke-width="0" /><rect x="98" y="907.75" width="17" height="17" rx="0" fill="#f2f2f2" stroke="none" stroke-width="0" /><rect x="311" y="907.75" width="17" height="17" rx="0" fill="#f2f2f2" stroke="none" stroke-width="0" /><rect x="284.375" y="748" width="17" height="17" rx="0" fill="#f2f2f2" stroke="none" stroke-width="0" /><rect x="284.375" y="961" width="17" height="17" rx="0" fill="#f2f2f2" stroke="none" stroke-width="0" /><rect x="98" y="934.375" width="17" height="17" rx="0" fill="#f2f2f2" stroke="none" stroke-width="0" /><rect x="311" y="934.375" width="17" height="17" rx="0" fill="#f2f2f2" stroke="none" stroke-width="0" /><rect x="311.0" y="748" width="17" height="17" rx="0" fill="#f2f2f2" stroke="none" stroke-width="0" /><rect x="311.0" y="961" width="17" height="17" rx="0" fill="#f2f2f2" stroke="none" stroke-width="0" /><path d="M132 870 H200 Q225 870 250 905 V938 H132Z" fill="#e6e6e6" stroke="none" stroke-width="0" /><circle cx="243" cy="838" r="62" fill="#353535" stroke="none" stroke-width="0" /><circle cx="243" cy="838" r="52" fill="#e6e6e6" stroke="none" stroke-width="0" /><rect x="640.0" y="748" width="17" height="17" rx="0" fill="#f2f2f2" stroke="none" stroke-width="0" /><rect x="640.0" y="959" width="17" height="17" rx="0" fill="#f2f2f2" stroke="none" stroke-width="0" /><rect x="666.375" y="748" width="17" height="17" rx="0" fill="#f2f2f2" stroke="none" stroke-width="0" /><rect x="666.375" y="959" width="17" height="17" rx="0" fill="#f2f2f2" stroke="none" stroke-width="0" /><rect x="640" y="774.375" width="17" height="17" rx="0" fill="#f2f2f2" stroke="none" stroke-width="0" /><rect x="851" y="774.375" width="17" height="17" rx="0" fill="#f2f2f2" stroke="none" stroke-width="0" /><rect x="692.75" y="748" width="17" height="17" rx="0" fill="#f2f2f2" stroke="none" stroke-width="0" /><rect x="692.75" y="959" width="17" height="17" rx="0" fill="#f2f2f2" stroke="none" stroke-width="0" /><rect x="640" y="800.75" width="17" height="17" rx="0" fill="#f2f2f2" stroke="none" stroke-width="0" /><rect x="851" y="800.75" width="17" height="17" rx="0" fill="#f2f2f2" stroke="none" stroke-width="0" /><rect x="719.125" y="748" width="17" height="17" rx="0" fill="#f2f2f2" stroke="none" stroke-width="0" /><rect x="719.125" y="959" width="17" height="17" rx="0" fill="#f2f2f2" stroke="none" stroke-width="0" /><rect x="640" y="827.125" width="17" height="17" rx="0" fill="#f2f2f2" stroke="none" stroke-width="0" /><rect x="851" y="827.125" width="17" height="17" rx="0" fill="#f2f2f2" stroke="none" stroke-width="0" /><rect x="745.5" y="748" width="17" height="17" rx="0" fill="#f2f2f2" stroke="none" stroke-width="0" /><rect x="745.5" y="959" width="17" height="17" rx="0" fill="#f2f2f2" stroke="none" stroke-width="0" /><rect x="640" y="853.5" width="17" height="17" rx="0" fill="#f2f2f2" stroke="none" stroke-width="0" /><rect x="851" y="853.5" width="17" height="17" rx="0" fill="#f2f2f2" stroke="none" stroke-width="0" /><rect x="771.875" y="748" width="17" height="17" rx="0" fill="#f2f2f2" stroke="none" stroke-width="0" /><rect x="771.875" y="959" width="17" height="17" rx="0" fill="#f2f2f2" stroke="none" stroke-width="0" /><rect x="640" y="879.875" width="17" height="17" rx="0" fill="#f2f2f2" stroke="none" stroke-width="0" /><rect x="851" y="879.875" width="17" height="17" rx="0" fill="#f2f2f2" stroke="none" stroke-width="0" /><rect x="798.25" y="748" width="17" height="17" rx="0" fill="#f2f2f2" stroke="none" stroke-width="0" /><rect x="798.25" y="959" width="17" height="17" rx="0" fill="#f2f2f2" stroke="none" stroke-width="0" /><rect x="640" y="906.25" width="17" height="17" rx="0" fill="#f2f2f2" stroke="none" stroke-width="0" /><rect x="851" y="906.25" width="17" height="17" rx="0" fill="#f2f2f2" stroke="none" stroke-width="0" /><rect x="824.625" y="748" width="17" height="17" rx="0" fill="#f2f2f2" stroke="none" stroke-width="0" /><rect x="824.625" y="959" width="17" height="17" rx="0" fill="#f2f2f2" stroke="none" stroke-width="0" /><rect x="640" y="932.625" width="17" height="17" rx="0" fill="#f2f2f2" stroke="none" stroke-width="0" /><rect x="851" y="932.625" width="17" height="17" rx="0" fill="#f2f2f2" stroke="none" stroke-width="0" /><rect x="851.0" y="748" width="17" height="17" rx="0" fill="#f2f2f2" stroke="none" stroke-width="0" /><rect x="851.0" y="959" width="17" height="17" rx="0" fill="#f2f2f2" stroke="none" stroke-width="0" /><path d="M715 782 H830 L790 822 H675Z" fill="#d0d0d0" stroke="none" stroke-width="0" /><path d="M715 840 H830 L790 880 H675Z" fill="#d0d0d0" stroke="none" stroke-width="0" /><path d="M715 898 H830 L790 938 H675Z" fill="#d0d0d0" stroke="none" stroke-width="0" /><rect x="1180.0" y="748" width="15" height="15" rx="0" fill="#8a8a8a" stroke="none" stroke-width="0" /><rect x="1180.0" y="959" width="15" height="15" rx="0" fill="#8a8a8a" stroke="none" stroke-width="0" /><rect x="1206.375" y="748" width="15" height="15" rx="0" fill="#8a8a8a" stroke="none" stroke-width="0" /><rect x="1206.375" y="959" width="15" height="15" rx="0" fill="#8a8a8a" stroke="none" stroke-width="0" /><rect x="1180" y="774.375" width="15" height="15" rx="0" fill="#8a8a8a" stroke="none" stroke-width="0" /><rect x="1391" y="774.375" width="15" height="15" rx="0" fill="#8a8a8a" stroke="none" stroke-width="0" /><rect x="1232.75" y="748" width="15" height="15" rx="0" fill="#8a8a8a" stroke="none" stroke-width="0" /><rect x="1232.75" y="959" width="15" height="15" rx="0" fill="#8a8a8a" stroke="none" stroke-width="0" /><rect x="1180" y="800.75" width="15" height="15" rx="0" fill="#8a8a8a" stroke="none" stroke-width="0" /><rect x="1391" y="800.75" width="15" height="15" rx="0" fill="#8a8a8a" stroke="none" stroke-width="0" /><rect x="1259.125" y="748" width="15" height="15" rx="0" fill="#8a8a8a" stroke="none" stroke-width="0" /><rect x="1259.125" y="959" width="15" height="15" rx="0" fill="#8a8a8a" stroke="none" stroke-width="0" /><rect x="1180" y="827.125" width="15" height="15" rx="0" fill="#8a8a8a" stroke="none" stroke-width="0" /><rect x="1391" y="827.125" width="15" height="15" rx="0" fill="#8a8a8a" stroke="none" stroke-width="0" /><rect x="1285.5" y="748" width="15" height="15" rx="0" fill="#8a8a8a" stroke="none" stroke-width="0" /><rect x="1285.5" y="959" width="15" height="15" rx="0" fill="#8a8a8a" stroke="none" stroke-width="0" /><rect x="1180" y="853.5" width="15" height="15" rx="0" fill="#8a8a8a" stroke="none" stroke-width="0" /><rect x="1391" y="853.5" width="15" height="15" rx="0" fill="#8a8a8a" stroke="none" stroke-width="0" /><rect x="1311.875" y="748" width="15" height="15" rx="0" fill="#8a8a8a" stroke="none" stroke-width="0" /><rect x="1311.875" y="959" width="15" height="15" rx="0" fill="#8a8a8a" stroke="none" stroke-width="0" /><rect x="1180" y="879.875" width="15" height="15" rx="0" fill="#8a8a8a" stroke="none" stroke-width="0" /><rect x="1391" y="879.875" width="15" height="15" rx="0" fill="#8a8a8a" stroke="none" stroke-width="0" /><rect x="1338.25" y="748" width="15" height="15" rx="0" fill="#8a8a8a" stroke="none" stroke-width="0" /><rect x="1338.25" y="959" width="15" height="15" rx="0" fill="#8a8a8a" stroke="none" stroke-width="0" /><rect x="1180" y="906.25" width="15" height="15" rx="0" fill="#8a8a8a" stroke="none" stroke-width="0" /><rect x="1391" y="906.25" width="15" height="15" rx="0" fill="#8a8a8a" stroke="none" stroke-width="0" /><rect x="1364.625" y="748" width="15" height="15" rx="0" fill="#8a8a8a" stroke="none" stroke-width="0" /><rect x="1364.625" y="959" width="15" height="15" rx="0" fill="#8a8a8a" stroke="none" stroke-width="0" /><rect x="1180" y="932.625" width="15" height="15" rx="0" fill="#8a8a8a" stroke="none" stroke-width="0" /><rect x="1391" y="932.625" width="15" height="15" rx="0" fill="#8a8a8a" stroke="none" stroke-width="0" /><rect x="1391.0" y="748" width="15" height="15" rx="0" fill="#8a8a8a" stroke="none" stroke-width="0" /><rect x="1391.0" y="959" width="15" height="15" rx="0" fill="#8a8a8a" stroke="none" stroke-width="0" /><path d="M1212 870 H1280 Q1305 870 1330 905 V938 H1212Z" fill="#9c9c9c" stroke="none" stroke-width="0" /><circle cx="1322" cy="838" r="62" fill="#353535" stroke="none" stroke-width="0" /><circle cx="1322" cy="838" r="52" fill="#9c9c9c" stroke="none" stroke-width="0" /><rect x="1745" y="815" width="145" height="145" fill="none" stroke="#f2f2f2" stroke-width="20" stroke-dasharray="26 22" stroke-dashoffset="13"/><rect x="1858" y="750" width="100" height="100" rx="0" fill="#353535" stroke="none" stroke-width="0" /><rect x="1870" y="762" width="74" height="74" rx="0" fill="#e6e6e6" stroke="none" stroke-width="0" /></g><g transform="translate(230 170) scale(0.100000)"><rect x="430" y="750" width="72" height="142" rx="0" fill="#9c9c9c" stroke="none" stroke-width="0" /><rect x="263" y="910" width="150" height="72" rx="0" fill="#e6e6e6" stroke="#f2f2f2" stroke-width="6" /><path d="M400 780 Q335 782 325 850" fill="none" stroke="#10a010" stroke-width="30" /><path d="M283 832 L370 845 L322 885Z" fill="#10a010" stroke="none" stroke-width="0" /><rect x="808" y="750" width="72" height="142" rx="0" fill="#9c9c9c" stroke="none" stroke-width="0" /><rect x="893" y="910" width="150" height="72" rx="0" fill="#e6e6e6" stroke="#f2f2f2" stroke-width="6" /><path d="M910 780 Q975 782 985 850" fill="none" stroke="#10a010" stroke-width="30" /><path d="M1027 832 L940 845 L988 885Z" fill="#10a010" stroke="none" stroke-width="0" /><path d="M1362 940 L1452 788 V940Z" fill="#9c9c9c" stroke="none" stroke-width="0" /><path d="M1490 788 L1582 940 H1490Z" fill="#e6e6e6" stroke="none" stroke-width="0" /><path d="M1470 752 V972" stroke="#f2f2f2" stroke-width="24" stroke-dasharray="34 12" fill="none"/><path d="M1930 768 L2078 850 H1930Z" fill="#9c9c9c" stroke="none" stroke-width="0" /><path d="M1930 900 H2078 L1930 982Z" fill="#e6e6e6" stroke="none" stroke-width="0" /><path d="M1898 875 H2118" stroke="#f2f2f2" stroke-width="22" stroke-dasharray="34 12" fill="none"/></g><g transform="translate(430 170) scale(0.100000)"><rect x="640" y="762" width="198" height="34" rx="0" fill="#f2f2f2" stroke="none" stroke-width="0" /><rect x="640" y="820" width="80" height="30" rx="0" fill="#a8a8a8" stroke="none" stroke-width="0" /><rect x="640" y="878" width="80" height="30" rx="0" fill="#a8a8a8" stroke="none" stroke-width="0" /><rect x="640" y="938" width="80" height="30" rx="0" fill="#a8a8a8" stroke="none" stroke-width="0" /><path d="M775 970 V868 H748 L790 824 L832 868 H805 V970Z" fill="#10a010" stroke="none" stroke-width="0" /><rect x="1180" y="762" width="80" height="30" rx="0" fill="#a8a8a8" stroke="none" stroke-width="0" /><rect x="1180" y="820" width="198" height="34" rx="0" fill="#f2f2f2" stroke="none" stroke-width="0" /><rect x="1180" y="878" width="80" height="30" rx="0" fill="#a8a8a8" stroke="none" stroke-width="0" /><rect x="1180" y="938" width="80" height="30" rx="0" fill="#a8a8a8" stroke="none" stroke-width="0" /><path d="M1315 970 V913 H1288 L1330 869 L1372 913 H1345 V970Z" fill="#10a010" stroke="none" stroke-width="0" /><rect x="1720" y="762" width="80" height="30" rx="0" fill="#a8a8a8" stroke="none" stroke-width="0" /><rect x="1720" y="820" width="80" height="30" rx="0" fill="#a8a8a8" stroke="none" stroke-width="0" /><rect x="1720" y="878" width="198" height="34" rx="0" fill="#f2f2f2" stroke="none" stroke-width="0" /><rect x="1720" y="938" width="80" height="30" rx="0" fill="#a8a8a8" stroke="none" stroke-width="0" /><path d="M1855 765 V822 H1828 L1870 866 L1912 822 H1885 V765Z" fill="#10a010" stroke="none" stroke-width="0" /></g><g transform="translate(600 170) scale(0.100000)"><rect x="560" y="762" width="80" height="30" rx="0" fill="#a8a8a8" stroke="none" stroke-width="0" /><rect x="560" y="820" width="80" height="30" rx="0" fill="#a8a8a8" stroke="none" stroke-width="0" /><rect x="560" y="878" width="80" height="30" rx="0" fill="#a8a8a8" stroke="none" stroke-width="0" /><rect x="560" y="938" width="198" height="34" rx="0" fill="#f2f2f2" stroke="none" stroke-width="0" /><path d="M693 765 V868 H666 L708 912 L750 868 H723 V765Z" fill="#10a010" stroke="none" stroke-width="0" /></g><g transform="translate(1080 160) scale(0.209512)"><rect x="1262" y="455" width="72" height="55" rx="4" fill="#e6e6e6" stroke="none" stroke-width="0" /><path d="M1315 455 V438 a18 18 0 0 1 36 0 V452" fill="none" stroke="#f2f2f2" stroke-width="12" /></g><rect x="1.6" y="289" width="43.8" height="44" rx="7" fill="url(#selg)" stroke="#1a1a1a" stroke-width="1"/><g transform="translate(0 288) scale(0.171430)"><path d="M90 78 V182 L117 160 L138 197 L163 184 L143 148 L188 136Z" fill="none" stroke="#f2f2f2" stroke-width="14" stroke-linejoin="round"/><path d="M78 455 Q82 420 92 400 M130 360 Q155 350 186 348" fill="none" stroke="#b0b0b0" stroke-width="6" /><rect x="90" y="358" width="42" height="42" rx="0" fill="#222" stroke="#f2f2f2" stroke-width="8" /><path d="M150 418 L192 438 L168 446 L154 462Z" fill="#f2f2f2" stroke="none" stroke-width="0" /><circle cx="118" cy="663" r="35" fill="none" stroke="#f2f2f2" stroke-width="12" /><rect x="126" y="668" width="64" height="62" rx="0" fill="#353535" stroke="#f2f2f2" stroke-width="12" /><path d="M126 700 A35 35 0 0 0 152 668" fill="none" stroke="#f2f2f2" stroke-width="8" /><rect x="82" y="902" width="108" height="110" rx="10" fill="#ff1493" stroke="#f2f2f2" stroke-width="13" /><circle cx="135" cy="1228" r="53" fill="#bf1f7c" stroke="#f2f2f2" stroke-width="13" /></g><g transform="translate(0 520) scale(0.171430)"><path d="M115 100 L157 128 L142 178 L90 180 L72 130Z" fill="#8a1c5a" stroke="#f2f2f2" stroke-width="11" stroke-linejoin="round"/><path d="M160 128 L171 152 L198 154 L178 172 L185 198 L160 184 L136 198 L142 172 L122 154 L149 152Z" fill="#5a2044" stroke="#f2f2f2" stroke-width="10" stroke-linejoin="round"/><path d="M135 355 L192 388 V452 L135 485 L78 452 V388Z" fill="#5a2040" stroke="#f2f2f2" stroke-width="11" stroke-linejoin="round"/><path d="M84 395 L135 422 V478 L84 450Z" fill="#ff1493" stroke="none" stroke-width="0" /><path d="M186 395 L135 422 V478 L186 450Z" fill="#a01c66" stroke="none" stroke-width="0" /><path d="M78 388 L135 420 L192 388 M135 420 V485" fill="none" stroke="#f2f2f2" stroke-width="9" /><path d="M187 740 Q200 690 170 658 Q135 630 100 655 Q70 685 90 720 Q112 748 145 732 Q165 715 155 693 Q142 675 125 685 Q115 695 125 705" fill="none" stroke="#f2f2f2" stroke-width="12" stroke-linecap="round"/><path d="M85 920 V1000" fill="none" stroke="#12a812" stroke-width="7" /><circle cx="85" cy="920" r="16" fill="#12a812" stroke="none" stroke-width="0" /><rect x="68" y="984" width="34" height="34" rx="0" fill="#12a812" stroke="none" stroke-width="0" /><path d="M92 975 Q110 925 170 915" fill="none" stroke="#a0a0a0" stroke-width="6" /><path d="M110 1035 L135 975 L172 950 L200 975 L180 1010Z" fill="#f2f2f2" stroke="none" stroke-width="0" /><path d="M118 1028 L158 985" fill="none" stroke="#353535" stroke-width="7" /><circle cx="160" cy="983" r="8" fill="#353535" stroke="none" stroke-width="0" /><path d="M172 950 L185 942 L205 962 L200 975Z" fill="#e6e6e6" stroke="none" stroke-width="0" /><path d="M75 1195 Q85 1180 100 1190 Q112 1205 98 1215 Q120 1215 118 1232 Q105 1250 85 1262" fill="none" stroke="#12a812" stroke-width="8" stroke-linecap="round"/><path d="M120 1275 L182 1213" fill="none" stroke="#f2f2f2" stroke-width="34" stroke-linecap="round"/><path d="M160 1215 L182 1237" fill="none" stroke="#353535" stroke-width="6" /><path d="M90 1305 L100 1275 L122 1295Z" fill="#12a812" stroke="none" stroke-width="0" /></g><g transform="translate(0 750) scale(0.171430)"><path d="M105 120 Q125 135 115 155 Q100 170 80 180" fill="none" stroke="#12a812" stroke-width="8" stroke-linecap="round"/><path d="M198 125 L135 188" fill="none" stroke="#f2f2f2" stroke-width="22" stroke-linecap="round"/><path d="M140 182 L120 202" fill="none" stroke="#f2f2f2" stroke-width="16" /><path d="M130 192 L122 184" fill="none" stroke="#353535" stroke-width="5" /><path d="M112 203 Q110 225 78 236 Q88 215 100 195Z" fill="#12a812" stroke="none" stroke-width="0" /><text x="66" y="501" font-family="Liberation Sans, sans-serif" font-weight="bold" font-size="138" fill="#f2f2f2" textLength="106" lengthAdjust="spacingAndGlyphs">A</text><rect x="188" y="380" width="16" height="136" rx="0" fill="#12a812" stroke="none" stroke-width="0" /><rect x="72" y="664" width="130" height="131" fill="url(#grd1)" stroke="#f2f2f2" stroke-width="8" rx="3"/><rect x="84" y="676" width="106" height="107" rx="0" fill="url(#grd1)" stroke="none" stroke-width="0" /><rect x="72" y="937" width="130" height="131" fill="url(#grd2)" stroke="#f2f2f2" stroke-width="8" rx="3"/><path d="M137 937 Q175 980 137 1002 Q100 1025 137 1068 M72 1002 Q115 965 137 1002 Q160 1040 202 1002" fill="none" stroke="#f2f2f2" stroke-width="7" /><path d="M97 1215 Q125 1250 112 1265 Q97 1280 82 1265 Q70 1250 97 1215Z" fill="#1e9bf0" stroke="none" stroke-width="0" /><path d="M100 1330 L160 1270" fill="none" stroke="#f2f2f2" stroke-width="24" stroke-linecap="round"/><path d="M103 1327 L158 1272" fill="none" stroke="#353535" stroke-width="10" stroke-linecap="round"/><path d="M150 1262 L178 1290" fill="none" stroke="#f2f2f2" stroke-width="12" stroke-linecap="round"/><path d="M165 1265 L190 1240" fill="none" stroke="#f2f2f2" stroke-width="28" stroke-linecap="round"/></g><g transform="translate(0 980) scale(0.171430)"><path d="M97 215 Q125 250 112 262 Q97 278 82 262 Q70 250 97 215Z" fill="#1e9bf0" stroke="none" stroke-width="0" /><path d="M112 200 L160 155 L200 198 L155 240Z" fill="none" stroke="#f2f2f2" stroke-width="9" stroke-linejoin="round"/><path d="M120 202 L195 200 L155 238Z" fill="#e6e6e6" stroke="none" stroke-width="0" /><path d="M138 178 L178 178 L160 160Z" fill="#222" stroke="none" stroke-width="0" /><path d="M150 150 L172 140 L182 170" fill="none" stroke="#f2f2f2" stroke-width="7" /><path d="M78 545 V495 Q95 490 105 470 Q125 430 165 437 Q188 442 185 462 Q170 452 155 462 Q150 480 170 490 Q185 495 198 493 V545Z" fill="#e6e6e6" stroke="none" stroke-width="0" /><rect x="118" y="760" width="80" height="56" rx="8" fill="#e6e6e6" stroke="none" stroke-width="0" /><path d="M135 755 Q138 730 158 728 Q178 730 181 755Z" fill="#e6e6e6" stroke="none" stroke-width="0" /><rect x="148" y="706" width="22" height="18" rx="4" fill="#e6e6e6" stroke="none" stroke-width="0" /><circle cx="95" cy="712" r="8" fill="#9a9a9a" stroke="none" stroke-width="0" /><circle cx="122" cy="712" r="6" fill="#9a9a9a" stroke="none" stroke-width="0" /><circle cx="85" cy="735" r="7" fill="#9a9a9a" stroke="none" stroke-width="0" /><circle cx="110" cy="738" r="6" fill="#9a9a9a" stroke="none" stroke-width="0" /><circle cx="97" cy="758" r="10" fill="#9a9a9a" stroke="none" stroke-width="0" /><circle cx="125" cy="742" r="5" fill="#9a9a9a" stroke="none" stroke-width="0" /><path d="M165 970 L200 1005 L160 1045 L125 1010Z" fill="#e6e6e6" stroke="#353535" stroke-width="5" stroke-linejoin="round"/><path d="M118 1017 L153 1052 L135 1068 Q120 1070 105 1058 L93 1043Z" fill="#9a9a9a" stroke="none" stroke-width="0" /></g><g transform="translate(1380 280) scale(0.209512)"><path d="M285 210 L325 172 V195 H365 V248 H340 V225 H325 V248Z" fill="#f2f2f2" stroke="none" stroke-width="0" /><circle cx="360" cy="175" r="40" fill="#222" stroke="none" stroke-width="0" /><circle cx="360" cy="175" r="34" fill="#1e9bf0" stroke="none" stroke-width="0" /><path d="M362 152 V178 H342" fill="none" stroke="#f2f2f2" stroke-width="7" /><path d="M1282 232 Q1290 190 1330 170 Q1350 160 1358 155" fill="none" stroke="#f2f2f2" stroke-width="9" stroke-linecap="round"/><circle cx="1282" cy="234" r="10" fill="#f2f2f2" stroke="none" stroke-width="0" /><circle cx="1360" cy="155" r="9" fill="#f2f2f2" stroke="none" stroke-width="0" /><path d="M1275 178 Q1295 195 1310 185 M1318 150 Q1318 170 1335 180 M1305 205 Q1325 215 1345 195" fill="none" stroke="#f2f2f2" stroke-width="8" stroke-linecap="round"/></g><g transform="translate(1660 280) scale(0.209512)"><path d="M940 195 V185 L905 148 H868 V235 H940" fill="none" stroke="#f2f2f2" stroke-width="14" stroke-linejoin="round" stroke-linecap="round"/><path d="M900 142 V192 H945" fill="none" stroke="#f2f2f2" stroke-width="12" stroke-linejoin="miter"/><path d="M910 192 H945 V180 L972 202 L945 224 V212 H910Z" fill="#12a812" stroke="none" stroke-width="0" /></g></svg></div></div><svg style="left:1860px;top:1298px;" width="230" height="90" viewBox="0 0 230 90"><defs><filter id="xsh" x="-10%" y="-20%" width="120%" height="150%"><feGaussianBlur stdDeviation="2.6"/></filter></defs><g transform="translate(9 12.5)" filter="url(#xsh)" opacity="0.7"><path d="M0 0 H18.6 V6 H7 V34.6 H18.6 V56 L11 43.5 V40.8 H0Z" fill="#6a2a3a"/><path d="M27 0 H46 V40.8 H27 V34.6 H38.6 V6 H27Z" fill="#6a2a3a"/><text transform="translate(55.8 41.3) scale(1.125 1)" font-family="Liberation Sans, sans-serif" font-weight="bold" font-size="57.8" letter-spacing="1.4" fill="#6a2a3a" stroke="#6a2a3a" stroke-width="0.8" stroke-linejoin="miter">XDA</text></g><g transform="translate(12 8.6)"><path d="M0 0 H18.6 V6 H7 V34.6 H18.6 V56 L11 43.5 V40.8 H0Z" fill="#f08aa6"/><path d="M27 0 H46 V40.8 H27 V34.6 H38.6 V6 H27Z" fill="#9bbfe8"/><text transform="translate(55.8 41.3) scale(1.125 1)" font-family="Liberation Sans, sans-serif" font-weight="bold" font-size="57.8" letter-spacing="1.4" fill="#fde5e8" stroke="#fde5e8" stroke-width="0.8" stroke-linejoin="miter">XDA</text></g></svg></body></html>
